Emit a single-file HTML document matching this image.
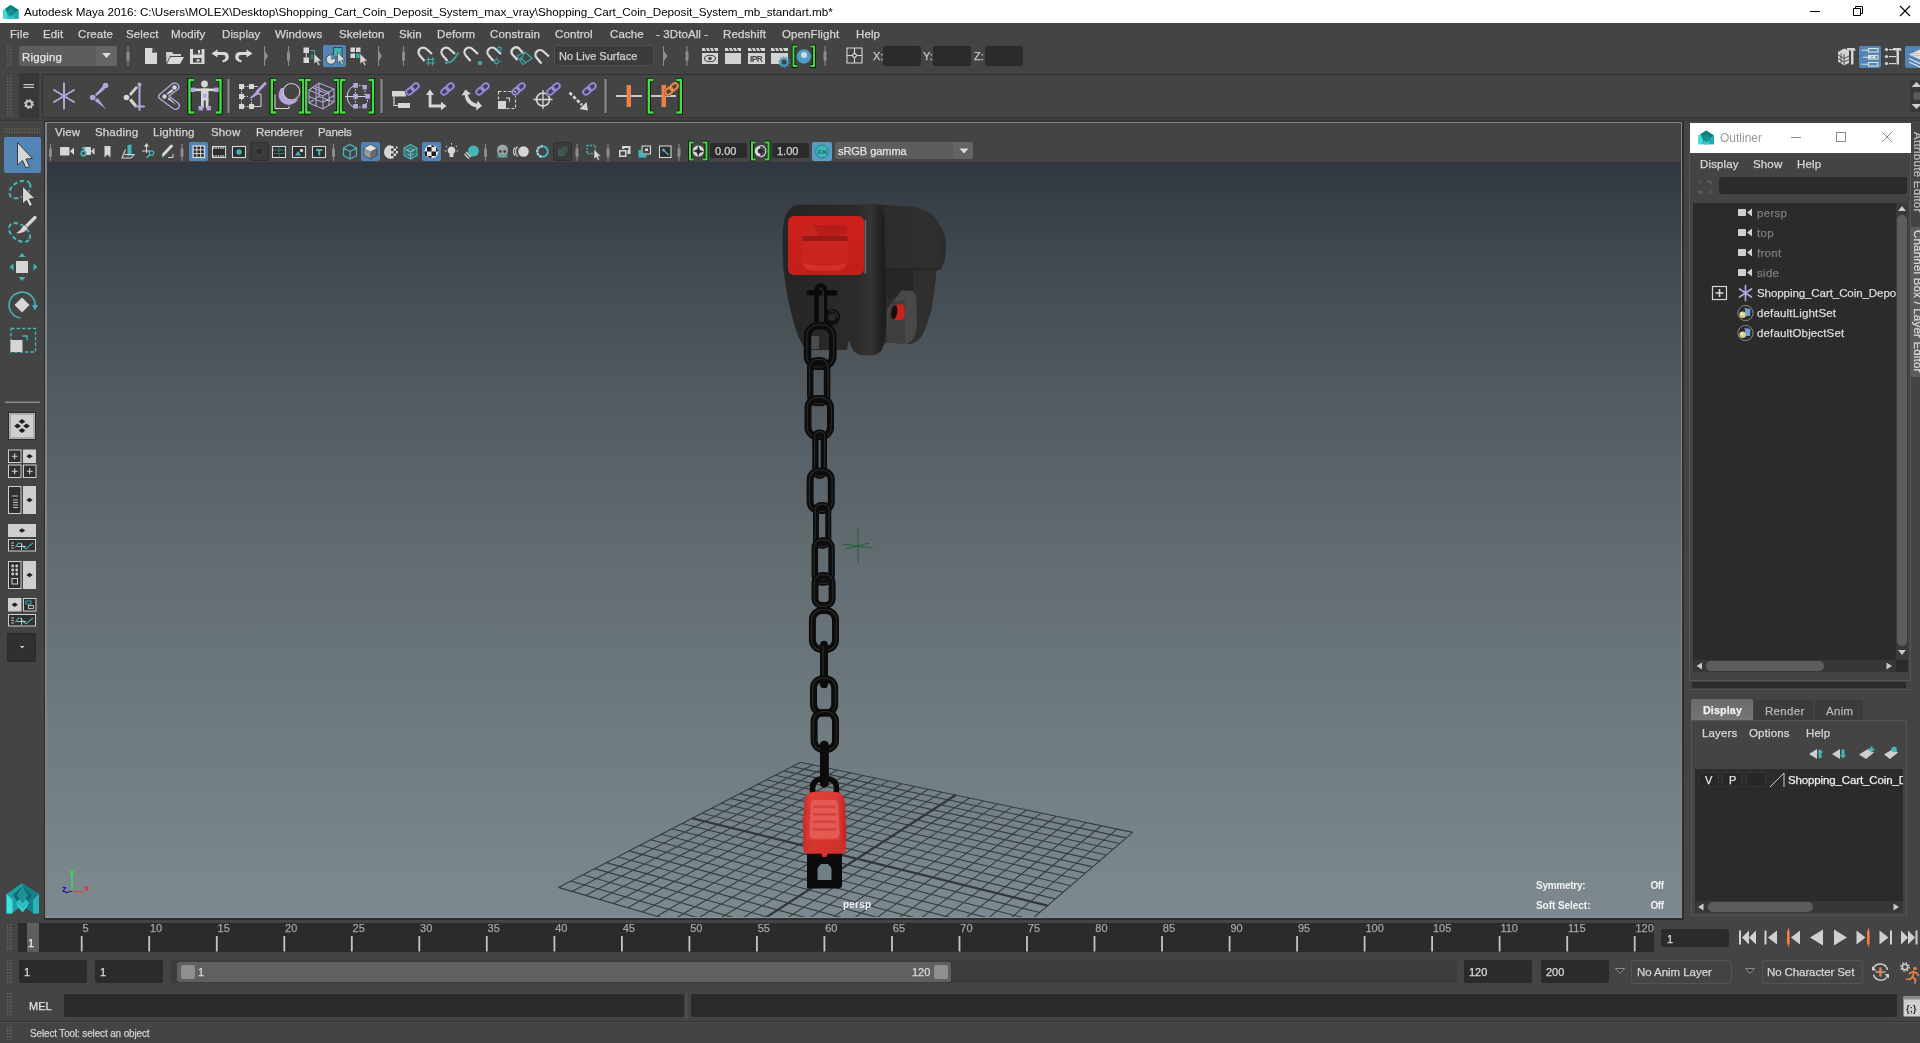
<!DOCTYPE html>
<html>
<head>
<meta charset="utf-8">
<title>Autodesk Maya 2016</title>
<style>
*{box-sizing:border-box;margin:0;padding:0}
html,body{width:1920px;height:1043px;overflow:hidden;background:#444444}
body{position:relative;will-change:transform;font-family:"Liberation Sans","DejaVu Sans",sans-serif;font-size:11px;color:#cfcfcf}
.a{position:absolute}
.t{position:absolute;white-space:nowrap;line-height:14px;-webkit-text-stroke:.25px currentColor}
#title .t,#right .t[style*="#999"]{-webkit-text-stroke:0}
#title{left:0;top:0;width:1920px;height:23px;background:#ffffff}
#title .t{color:#000;font-size:11.7px;top:5px}
.menu .t{color:#d6d6d6;font-size:11.5px;top:27px;letter-spacing:.1px}
.fld{position:absolute;background:#2b2b2b;border-radius:2px}
svg{position:absolute;overflow:visible}
</style>
</head>
<body>
<!-- TITLE BAR -->
<div id="title" class="a">
  <svg style="left:0;top:0" width="22" height="23"><path d="M3.200 10L10.800 5L18.600 10V18.800H3.200Z" fill="#2bbcc2"/><path d="M3.200 10L7 7.500L8.500 13L6.500 18.800H3.200Z" fill="#3fdcd4"/><path d="M10.800 5L18.600 10L15 13L10.800 9L7 13L5.500 8.500Z" fill="#0f7f7c"/><path d="M7 13L10.800 9L15 13L13 18.800H9Z" fill="#14908f"/><path d="M8.500 14.500L10.800 17L13 14.500L14 18.800H7.800Z" fill="#35c8d0"/><path d="M15 13L18.600 10V18.800H14Z" fill="#22aab2"/></svg>
  <span class="t" style="left:24px;letter-spacing:-.02px">Autodesk Maya 2016: C:\Users\MOLEX\Desktop\Shopping_Cart_Coin_Deposit_System_max_vray\Shopping_Cart_Coin_Deposit_System_mb_standart.mb*</span>
  <svg style="left:1810px;top:6px" width="12" height="12"><path d="M0 5.5H10" stroke="#000" stroke-width="1"/></svg>
  <svg style="left:1853px;top:6px" width="12" height="12"><path d="M.5 2.5H7.5V9.5H.5Z M2.5 2.5V.5H9.5V7.5H7.5" stroke="#000" fill="none"/></svg>
  <svg style="left:1900px;top:6px" width="12" height="12"><path d="M0 0L10 10M10 0L0 10" stroke="#000" stroke-width="1.1"/></svg>
</div>

<!-- MENU BAR -->
<div class="menu">
  <span class="t" style="left:10px">File</span>
  <span class="t" style="left:43px">Edit</span>
  <span class="t" style="left:78px">Create</span>
  <span class="t" style="left:126px">Select</span>
  <span class="t" style="left:171px">Modify</span>
  <span class="t" style="left:222px">Display</span>
  <span class="t" style="left:275px">Windows</span>
  <span class="t" style="left:339px">Skeleton</span>
  <span class="t" style="left:399px">Skin</span>
  <span class="t" style="left:437px">Deform</span>
  <span class="t" style="left:490px">Constrain</span>
  <span class="t" style="left:555px">Control</span>
  <span class="t" style="left:610px">Cache</span>
  <span class="t" style="left:656px">- 3DtoAll -</span>
  <span class="t" style="left:723px">Redshift</span>
  <span class="t" style="left:782px">OpenFlight</span>
  <span class="t" style="left:856px">Help</span>
</div>

<!-- STATUS LINE -->
<div id="status">
  <!-- dotted grip -->
  <svg style="left:7px;top:46px" width="8" height="22"><g fill="#5e5e5e"><rect x="0" y="0" width="1.5" height="1.5"/><rect x="3" y="0" width="1.5" height="1.5"/><rect x="0" y="3" width="1.5" height="1.5"/><rect x="3" y="3" width="1.5" height="1.5"/><rect x="0" y="6" width="1.5" height="1.5"/><rect x="3" y="6" width="1.5" height="1.5"/><rect x="0" y="9" width="1.5" height="1.5"/><rect x="3" y="9" width="1.5" height="1.5"/><rect x="0" y="12" width="1.5" height="1.5"/><rect x="3" y="12" width="1.5" height="1.5"/><rect x="0" y="15" width="1.5" height="1.5"/><rect x="3" y="15" width="1.5" height="1.5"/><rect x="0" y="18" width="1.5" height="1.5"/><rect x="3" y="18" width="1.5" height="1.5"/></g></svg>
  <div class="a" style="left:19px;top:46px;width:98px;height:20px;background:#5d5d5d;border-radius:2px"></div>
  <div class="a" style="left:96px;top:46px;width:21px;height:20px;background:#656565;border-radius:0 2px 2px 0"></div>
  <span class="t" style="left:22px;top:50px;font-size:11.500px;color:#e6e6e6;letter-spacing:.15px">Rigging</span>
  <svg style="left:102px;top:53px" width="10" height="6"><path d="M0 0H9L4.5 5Z" fill="#dcdcdc"/></svg>
  <!-- handles & collapse arrows -->
  <svg style="left:0;top:44px" width="1100" height="26">
    <g fill="#8c8c8c">
      <rect x="127.5" y="2" width="1" height="20"/><rect x="126.5" y="7" width="3" height="10" rx="1.5"/>
      <rect x="288" y="2" width="1" height="20"/><rect x="287" y="7" width="3" height="10" rx="1.5"/>
      <rect x="403" y="2" width="1" height="20"/><rect x="402" y="7" width="3" height="10" rx="1.5"/>
      <rect x="686.5" y="2" width="1" height="20"/><rect x="685.5" y="7" width="3" height="10" rx="1.5"/>
      <rect x="824.5" y="2" width="1" height="20"/><rect x="823.5" y="7" width="3" height="10" rx="1.5"/>
      <rect x="264" y="2" width="1" height="20"/><path d="M265 7L268 12L265 17Z"/>
      <rect x="378" y="2" width="1" height="20"/><path d="M379 7L382 12L379 17Z"/>
      <rect x="663" y="2" width="1" height="20"/><path d="M664 7L667.500 12L664 17Z"/>
    </g>
  </svg>
  <!-- new / open / save / undo / redo -->
  <svg style="left:140px;top:44px" width="120" height="26">
    <path d="M5 4H12L17 9V20H5Z" fill="#d8d8d8"/><path d="M12 4V9H17" fill="#444" stroke="#d8d8d8" stroke-width=".6"/>
    <path d="M26 8H32L33.500 10H41V12H30L26.500 19.500Z" fill="#d0d0d0"/><path d="M30.500 13H44L40 20H27Z" fill="#d8d8d8"/>
    <path d="M50 5H64.500V20H50Z" fill="#d8d8d8"/><rect x="53" y="5" width="8.500" height="5.500" fill="#444"/><rect x="58" y="6" width="2" height="3.500" fill="#d8d8d8"/><rect x="53" y="14" width="8.500" height="4.500" fill="#444"/><rect x="56.500" y="15.300" width="3" height="2.200" fill="#d8d8d8"/>
    <path d="M77.500 5.500L71.500 9.500L77.500 13.500V11H83Q85.500 11 85.500 13.200Q85.500 15.500 82 16.500L83 18.500Q88.800 17.200 88.800 12.800Q88.800 8 83.500 8H77.500Z" fill="#d8d8d8"/>
    <path d="M106.500 5.500L112.500 9.500L106.500 13.500V11H101Q98.500 11 98.500 13.200Q98.500 15.500 102 16.500L101 18.500Q95.200 17.200 95.200 12.800Q95.200 8 100.500 8H106.500Z" fill="#d8d8d8"/>
  </svg>
  <!-- selection mode icons -->
  <div class="a" style="left:323px;top:45px;width:23px;height:22px;background:#5285b6;border-radius:2px"></div>
  <svg style="left:300px;top:44px" width="70" height="26">
    <g fill="#d8d8d8"><rect x="3.500" y="3.500" width="5.500" height="5.500"/><rect x="3.500" y="13.500" width="5.500" height="5.500"/><rect x="5.800" y="9" width="1" height="4.500"/></g>
    <path d="M10 6.500H14.500V10.500M12 10.500V15" stroke="#3aa7a7" fill="none" stroke-width="1.200"/>
    <path d="M14 9.500L14 20L16.500 17.800L18.300 21.800L20 21L18.200 17.200L21.500 17Z" fill="#d8d8d8" stroke="#444" stroke-width=".5"/>
    <rect x="33.500" y="3.500" width="8.500" height="9.500" fill="#45b0b0" stroke="#333" stroke-width=".8"/>
    <circle cx="31" cy="15.500" r="4.800" fill="#d8d8d8" stroke="#333" stroke-width=".8"/><path d="M31 15.500V10.700A4.800 4.800 0 0 1 35.800 15.500Z" fill="#5285b6"/>
    <path d="M37.500 8L37.500 19L40 16.800L41.800 20.800L43.500 20L41.700 16.200L45 16Z" fill="#d8d8d8" stroke="#444" stroke-width=".6"/>
    <g fill="#d8d8d8"><rect x="50.500" y="3.500" width="4.500" height="4.500"/><rect x="56" y="3.500" width="4.500" height="4.500"/><rect x="50.500" y="9.500" width="4.500" height="4.500"/></g><rect x="56" y="9.500" width="4.500" height="4.500" fill="#3aa7a7"/>
    <path d="M60 9.500L60 20L62.500 17.800L64.300 21.800L66 21L64.200 17.200L67.500 17Z" fill="#d8d8d8" stroke="#444" stroke-width=".5"/>
  </svg>
  <!-- magnets -->
  <svg style="left:415px;top:44px" width="140" height="26">
    <g fill="none" stroke="#d8d8d8" stroke-width="2.300" stroke-linecap="butt">
      <path d="M9.500 17L4.800 11.500A4.600 4.600 0 0 1 11.500 5L17 10"/>
      <path d="M32.500 17L27.800 11.500A4.600 4.600 0 0 1 34.500 5L40 10"/>
      <path d="M55.500 17L50.800 11.500A4.600 4.600 0 0 1 57.500 5L63 10"/>
      <path d="M78.500 17L73.800 11.500A4.600 4.600 0 0 1 80.500 5L86 10"/>
      <path d="M102.500 16L97 10A4.600 4.600 0 0 1 103.500 4L109 10"/>
      <path d="M126.500 19.500L121.800 14A4.600 4.600 0 0 1 128.500 7.500L134 12.500"/>
    </g>
    <g stroke="#3aa7a7" stroke-width="1.200" fill="none">
      <path d="M11 15.500H20M11 19H20M13.500 13V21.500M17.500 13V21.500"/>
      <path d="M30 19Q36 19 39 15T43.500 8.500" stroke-width="1.800"/>
      <circle cx="84.500" cy="5" r="1.800"/><circle cx="81.500" cy="17.500" r="2"/><path d="M81.500 14V13M81.500 21V22M85 17.500H86.500"/>
      <path d="M102 12L110 8L117 14.500L108 20.500Z M105 13.500L111 18.500M108.500 11L105 17"/>
    </g>
    <circle cx="65" cy="19" r="2.300" fill="#3aa7a7"/>
  </svg>
  <div class="a" style="left:554px;top:45px;width:100px;height:21px;background:#3b3b3b;border:1px solid #4f4f4f;border-radius:3px"></div>
  <span class="t" style="left:559px;top:49px;font-size:11px;color:#d2d2d2;letter-spacing:0">No Live Surface</span>
  <!-- render icons -->
  <svg style="left:700px;top:44px" width="120" height="26">
    <g fill="#d4d4d4">
      <rect x="2" y="9" width="16" height="11"/><path d="M2 4H18V7H2Z"/>
      <rect x="25" y="9" width="16" height="11"/><path d="M25 4H41V7H25Z"/>
      <rect x="48" y="9" width="17" height="11"/><path d="M48 4H65V7H48Z"/>
      <rect x="71" y="9" width="17" height="11"/><path d="M71 4H88V7H71Z"/>
    </g>
    <g stroke="#444" stroke-width="1.200"><path d="M5 3.500L7 7.500M9 3.500L11 7.500M13 3.500L15 7.500M28 3.500L30 7.500M32 3.500L34 7.500M36 3.500L38 7.500M51 3.500L53 7.500M55 3.500L57 7.500M59 3.500L61 7.500M74 3.500L76 7.500M78 3.500L80 7.500M82 3.500L84 7.500"/></g>
    <ellipse cx="10" cy="14.500" rx="5.500" ry="3.300" fill="none" stroke="#444" stroke-width="1.100"/><circle cx="10" cy="14.500" r="1.800" fill="#444"/>
    <text x="50" y="18.300" font-size="8.500" font-weight="bold" fill="#444" font-family="Liberation Sans, sans-serif" textLength="13">IPR</text>
    <circle cx="84" cy="18" r="3.600" fill="#444" stroke="#4a9fc4" stroke-width="2"/><circle cx="84" cy="18" r="5" fill="none" stroke="#4a9fc4" stroke-width="1.300" stroke-dasharray="1.600 1.500"/>
    <path d="M97 2.500H93.500V22H97M110.500 2.500H114V22H110.500" fill="none" stroke="#000" stroke-width="3.400"/>
    <path d="M97 2.500H93.500V22H97M110.500 2.500H114V22H110.500" fill="none" stroke="#3be03b" stroke-width="2"/>
    <circle cx="103.800" cy="12.500" r="7.200" fill="#4a9fc4"/><circle cx="104" cy="11" r="3" fill="#d8d8d8"/>
  </svg>
  <svg style="left:846px;top:47px" width="18" height="18"><path d="M1 1H16V16H1Z M8.500 1V6M8.500 11V16M1 8.500H6M11 8.500H16 M8.500 6L11 8.500L8.500 11L6 8.500Z" fill="none" stroke="#d8d8d8" stroke-width="1.100"/></svg>
  <span class="t" style="left:873px;top:49px;font-size:11px;color:#c8c8c8">X:</span>
  <span class="t" style="left:923px;top:49px;font-size:11px;color:#c8c8c8">Y:</span>
  <span class="t" style="left:974px;top:49px;font-size:11px;color:#c8c8c8">Z:</span>
  <div class="fld" style="left:883px;top:46px;width:38px;height:20px"></div>
  <div class="fld" style="left:933px;top:46px;width:38px;height:20px"></div>
  <div class="fld" style="left:985px;top:46px;width:38px;height:20px"></div>
  <!-- right icons -->
  <div class="a" style="left:1859px;top:46px;width:22px;height:22px;background:#5285b6;border-radius:2px"></div>
  <div class="a" style="left:1905px;top:46px;width:15px;height:22px;background:#5285b6;border-radius:2px 0 0 2px"></div>
  <svg style="left:1836px;top:44px" width="84" height="26">
    <g fill="#d4d4d4"><path d="M2 8L8 4.500L13 6.500V19L8 21.500L2 17.500Z"/><path d="M11 4H18.500L20 6.500H17.500V20.500H15V6.500H11Z"/></g>
    <path d="M2 11L8 14.500L13 12M2 14.500L8 18L13 15.500M8 10V21.500M5 9.500V19.500" stroke="#444" stroke-width=".9" fill="none"/>
    <g fill="none" stroke="#e0e0e0" stroke-width="1.100"><rect x="32.500" y="4.500" width="9.500" height="3.500"/><rect x="32.500" y="11.500" width="9.500" height="3.500"/><rect x="32.500" y="18.500" width="9.500" height="3.500"/><path d="M25.500 6.200H32.500M27 13.200H32.500M25.500 20.200H32.500"/></g><circle cx="38" cy="13.200" r="1.600" fill="#e0e0e0"/><rect x="33" y="12" width="2.500" height="2.500" fill="#e0e0e0"/>
    <g fill="#d4d4d4"><circle cx="50.500" cy="5.500" r="1.600"/><circle cx="50.500" cy="12.500" r="1.600"/><circle cx="50.500" cy="19.500" r="1.600"/><rect x="53" y="5" width="4" height="1.200"/><rect x="53" y="12" width="7" height="1.200"/><rect x="53" y="19" width="7" height="1.200"/><path d="M57 4H64.500L66 6.500H63V20.500H60.500V6.500H57Z"/></g>
    <path d="M73 10.500L84 5.500L95 10.500L84 15.500Z" fill="#e0e0e0"/><path d="M73 14.500L84 19.500L95 14.500M73 18L84 23L95 18" fill="none" stroke="#e0e0e0" stroke-width="1.200"/><path d="M76 9.500H92M76 11.500H92" stroke="#c9a0a0" stroke-width=".6"/>
  </svg>
</div>

<!-- SHELF -->
<div id="shelf">
      <div class="a" style="left:19px;top:73px;width:20px;height:45px;background:#383838"></div>
  <div class="a" style="left:42px;top:74px;width:1878px;height:44px;background:#444;border:1px solid #303030;border-right:0;border-bottom-color:#363636"></div>
    <div class="a" style="left:1910px;top:80px;width:10px;height:32px;background:#393939"></div>
  <svg style="left:0;top:72px" width="1920" height="50">
    <g fill="#686868"><rect x="7" y="3" width="1.4" height="1.4"/><rect x="10.2" y="3" width="1.4" height="1.4"/><rect x="7" y="6" width="1.4" height="1.4"/><rect x="10.2" y="6" width="1.4" height="1.4"/><rect x="7" y="9" width="1.4" height="1.4"/><rect x="10.2" y="9" width="1.4" height="1.4"/><rect x="7" y="12" width="1.4" height="1.4"/><rect x="10.2" y="12" width="1.4" height="1.4"/><rect x="7" y="15" width="1.4" height="1.4"/><rect x="10.2" y="15" width="1.4" height="1.4"/><rect x="7" y="18" width="1.4" height="1.4"/><rect x="10.2" y="18" width="1.4" height="1.4"/><rect x="7" y="21" width="1.4" height="1.4"/><rect x="10.2" y="21" width="1.4" height="1.4"/><rect x="7" y="24" width="1.4" height="1.4"/><rect x="10.2" y="24" width="1.4" height="1.4"/><rect x="7" y="27" width="1.4" height="1.4"/><rect x="10.2" y="27" width="1.4" height="1.4"/><rect x="7" y="30" width="1.4" height="1.4"/><rect x="10.2" y="30" width="1.4" height="1.4"/><rect x="7" y="33" width="1.4" height="1.4"/><rect x="10.2" y="33" width="1.4" height="1.4"/><rect x="7" y="36" width="1.4" height="1.4"/><rect x="10.2" y="36" width="1.4" height="1.4"/><rect x="7" y="39" width="1.4" height="1.4"/><rect x="10.2" y="39" width="1.4" height="1.4"/><rect x="7" y="42" width="1.4" height="1.4"/><rect x="10.2" y="42" width="1.4" height="1.4"/></g>
    <path d="M23.500 12.700H34M23.500 15.300H34" stroke="#c4c4c4" stroke-width="1.300"/>
    <circle cx="29" cy="32" r="3" fill="none" stroke="#c4c4c4" stroke-width="2"/><circle cx="29" cy="32" r="4.300" fill="none" stroke="#c4c4c4" stroke-width="1.500" stroke-dasharray="1.500 1.880"/>
    <path d="M1911.500 15L1916.500 10L1921.500 15Z M1911.500 32L1916.500 37L1921.500 32Z" fill="#cfcfcf"/><circle cx="1917" cy="24" r="4" fill="#5c5c5c"/>
    <!-- 1 joint asterisk -->
    <path d="M64 11.500V36.500M54 18L74 30M54 30L74 18" stroke="#b5a6de" stroke-width="2" stroke-linecap="round"/>
    <!-- 2 joint < -->
    <g fill="#b5a6de"><circle cx="105.500" cy="13.500" r="2.800"/><circle cx="92.700" cy="25.500" r="2.800"/><path d="M103 14L95 22.500L96.500 24L105 17Z"/><path d="M94.500 28.500L97.500 26L106 37Z"/></g>
    <!-- 3 IK handle -->
    <g fill="#d6d6d6"><circle cx="126.500" cy="25.500" r="2.800"/><path d="M129 22L136 14L138 15.500L131 24Z"/><path d="M129 28.500L131.500 26.500L137 33L134.500 35Z"/></g>
    <path d="M139.500 12V38M135 34.500H144" stroke="#b5a6de" stroke-width="2" stroke-linecap="round"/><circle cx="139.500" cy="12.500" r="2" fill="#b5a6de"/>
    <!-- 4 IK spline -->
    <path d="M172.500 11.500Q177 10 178.800 14Q179.500 16.500 177 18L169 24L178 31Q180.500 33.500 178.500 36Q176.500 38.500 173 36.500L159.500 26.500Q157.500 24.500 159.500 22.500Z" fill="none" stroke="#b5a6de" stroke-width="1.400"/>
    <g fill="#d6d6d6"><circle cx="174.500" cy="15.500" r="2.200"/><circle cx="164.500" cy="24.500" r="2.200"/><path d="M172 17L166.500 21.500L167.500 22.800L173.500 19Z"/><path d="M167.500 27L169 25.500L176.500 33Z"/></g>
    <!-- 5 HIK -->
    <path d="M194.0 8H189.5V40.5H194.0M216.0 8H220.5V40.5H216.0" fill="none" stroke="#0a0a0a" stroke-width="4.2"/><path d="M194.0 8H189.5V40.5H194.0M216.0 8H220.5V40.5H216.0" fill="none" stroke="#3fe03f" stroke-width="2.4"/>
    <g fill="#d6d6d6"><circle cx="204.500" cy="12" r="3.400"/><rect x="193" y="16.500" width="23" height="2.600"/><rect x="201" y="16.500" width="7.500" height="12"/><rect x="201" y="27" width="2.800" height="9"/><rect x="205.700" y="27" width="2.800" height="9"/></g>
    <g fill="#b5a6de"><rect x="190.800" y="15.600" width="4.400" height="4.400"/><rect x="214.300" y="15.600" width="4.400" height="4.400"/><rect x="202.800" y="21.800" width="4" height="4"/><rect x="198.600" y="34" width="4.400" height="4.400"/><rect x="206.500" y="34" width="4.400" height="4.400"/></g>
    <rect x="227.500" y="7" width="2" height="34" fill="#8c8c8c"/>
    <!-- 6 paint weights -->
    <g fill="#d6d6d6"><rect x="239" y="12" width="5" height="5"/><rect x="249" y="12" width="5" height="5"/><rect x="239" y="22" width="5" height="5"/><rect x="239" y="32" width="5" height="5"/><rect x="249" y="32" width="5" height="5"/></g>
    <path d="M244 14.500H249M241.500 17V22M241.500 27V32M244 34.500H249M251.500 27V32M244 24.500H248" stroke="#d6d6d6" stroke-width="1" stroke-dasharray="1.600 1.400"/>
    <path d="M254 14.500H258M254 34.500H261V22H257" stroke="#d6d6d6" stroke-width="1" fill="none"/>
    <path d="M265 11.500L257 20" stroke="#b5a6de" stroke-width="2.800" stroke-linecap="round"/><path d="M257.500 18.500L259.500 20.500Q254 26.500 249 26.500Q253 23 257.500 18.500Z" fill="#b5a6de"/>
    <!-- 7 -->
    <path d="M276.3 8H271.8V40.5H276.3M298.8 8H303.3V40.5H298.8" fill="none" stroke="#0a0a0a" stroke-width="4.2"/><path d="M276.3 8H271.8V40.5H276.3M298.8 8H303.3V40.5H298.8" fill="none" stroke="#3fe03f" stroke-width="2.4"/>
    <path d="M275 22.500V36.500H289V34" fill="none" stroke="#d6d6d6" stroke-width="1"/>
    <path d="M281 16Q276 24 281.500 30Q288 35.500 295.500 30.500Q297 29 298 27Q290 31 285.500 26Q282 21.500 284 16Z" fill="#b5a6de"/>
    <circle cx="291.500" cy="19.800" r="8.300" fill="#444" stroke="#d6d6d6" stroke-width="1.100"/>
    <!-- 8 lattice -->
    <path d="M310.8 8H306.3V40.5H310.8M333.8 8H338.3V40.5H333.8" fill="none" stroke="#0a0a0a" stroke-width="4.2"/><path d="M310.8 8H306.3V40.5H310.8M333.8 8H338.3V40.5H333.8" fill="none" stroke="#3fe03f" stroke-width="2.4"/>
    <g fill="none" stroke="#b5a6de" stroke-width="1.100"><path d="M309 18L319 11L334 17V30L323 37L309 31Z"/><path d="M309 18L323 24L334 17M323 24V37M309 24.500L323 30.500L334 23.500M316 14.500L329 20.500V33.500M316 14.500V34M319 11V24.500L309 31M319 24.500L334 30M312.500 15.500L326.500 21.500"/></g>
    <!-- 9 cluster -->
    <path d="M345.5 8H341V40.5H345.5M368.5 8H373V40.5H368.5" fill="none" stroke="#0a0a0a" stroke-width="4.2"/><path d="M345.5 8H341V40.5H345.5M368.5 8H373V40.5H368.5" fill="none" stroke="#3fe03f" stroke-width="2.4"/>
    <path d="M354.500 13.500A12 12 0 0 0 354.500 35.500M345 24.500H365" fill="none" stroke="#d6d6d6" stroke-width="1"/>
    <path d="M356 13.500H365.500M356 24.500H367.500M356 35H365.500M355.500 14V35M365 15.500V24M367.500 25V30L365 34" stroke="#d6d6d6" stroke-width="1" stroke-dasharray="1.600 1.400" fill="none"/>
    <g fill="#b5a6de"><rect x="353.300" y="11" width="4.700" height="4.700"/><rect x="362.500" y="13" width="4.400" height="4.400"/><rect x="353.300" y="22" width="4.700" height="4.700"/><rect x="365.300" y="22" width="4.700" height="4.700"/><rect x="353.300" y="32" width="4.700" height="4.700"/><rect x="362.500" y="32" width="4.400" height="4.400"/></g>
    <rect x="380.500" y="7" width="2" height="34" fill="#8c8c8c"/>
    <!-- 10 parent constraint -->
    <g fill="#d6d6d6"><rect x="392" y="19" width="14" height="5.500"/><rect x="398" y="31" width="12" height="5"/></g><path d="M394 24.500V33.500H398" fill="none" stroke="#d6d6d6" stroke-width="1.200"/>
    <g transform="translate(412.5 17) rotate(-40) scale(.92)"><rect x="-8" y="-3" width="9" height="6" rx="3" fill="none" stroke="#4b4480" stroke-width="3.2"/><rect x="-1" y="-3" width="9" height="6" rx="3" fill="none" stroke="#4b4480" stroke-width="3.2"/><rect x="-8" y="-3" width="9" height="6" rx="3" fill="none" stroke="#9a8fd0" stroke-width="1.8"/><rect x="-1" y="-3" width="9" height="6" rx="3" fill="none" stroke="#9a8fd0" stroke-width="1.8"/></g>
    <!-- 11 point -->
    <path d="M430 17.500L426 23H428.700V35.500H441V38.200L446.500 34L441 29.800V32.500H431.500V23H434Z" fill="#d6d6d6"/>
    <g transform="translate(447.5 17) rotate(-40) scale(.92)"><rect x="-8" y="-3" width="9" height="6" rx="3" fill="none" stroke="#4b4480" stroke-width="3.2"/><rect x="-1" y="-3" width="9" height="6" rx="3" fill="none" stroke="#4b4480" stroke-width="3.2"/><rect x="-8" y="-3" width="9" height="6" rx="3" fill="none" stroke="#9a8fd0" stroke-width="1.8"/><rect x="-1" y="-3" width="9" height="6" rx="3" fill="none" stroke="#9a8fd0" stroke-width="1.8"/></g>
    <!-- 12 orient -->
    <path d="M465.500 17.500L461.500 23.500L464.500 23Q466 33.500 476.500 35.500L476 38.500L482 34L477.500 28.500L477 31.800Q469.500 30 467.800 22.500L471 22Z" fill="#d6d6d6"/>
    <g transform="translate(482.5 17) rotate(-40) scale(.92)"><rect x="-8" y="-3" width="9" height="6" rx="3" fill="none" stroke="#4b4480" stroke-width="3.2"/><rect x="-1" y="-3" width="9" height="6" rx="3" fill="none" stroke="#4b4480" stroke-width="3.2"/><rect x="-8" y="-3" width="9" height="6" rx="3" fill="none" stroke="#9a8fd0" stroke-width="1.8"/><rect x="-1" y="-3" width="9" height="6" rx="3" fill="none" stroke="#9a8fd0" stroke-width="1.8"/></g>
    <!-- 13 scale -->
    <rect x="498.500" y="19.500" width="17" height="17" fill="none" stroke="#d6d6d6" stroke-width="1.100" stroke-dasharray="3 2"/><rect x="498" y="29" width="8" height="8" fill="#d6d6d6"/><path d="M506 26H509.500V29.500" fill="none" stroke="#d6d6d6" stroke-width="1.100"/>
    <g transform="translate(518.5 17) rotate(-40) scale(.92)"><rect x="-8" y="-3" width="9" height="6" rx="3" fill="none" stroke="#4b4480" stroke-width="3.2"/><rect x="-1" y="-3" width="9" height="6" rx="3" fill="none" stroke="#4b4480" stroke-width="3.2"/><rect x="-8" y="-3" width="9" height="6" rx="3" fill="none" stroke="#9a8fd0" stroke-width="1.8"/><rect x="-1" y="-3" width="9" height="6" rx="3" fill="none" stroke="#9a8fd0" stroke-width="1.8"/></g>
    <!-- 14 aim -->
    <circle cx="543" cy="27.500" r="6.500" fill="none" stroke="#d6d6d6" stroke-width="1.700"/><path d="M533.500 27.500H552.500M543 18V37" stroke="#d6d6d6" stroke-width="1.300"/>
    <g transform="translate(553.5 17) rotate(-40) scale(.92)"><rect x="-8" y="-3" width="9" height="6" rx="3" fill="none" stroke="#4b4480" stroke-width="3.2"/><rect x="-1" y="-3" width="9" height="6" rx="3" fill="none" stroke="#4b4480" stroke-width="3.2"/><rect x="-8" y="-3" width="9" height="6" rx="3" fill="none" stroke="#9a8fd0" stroke-width="1.8"/><rect x="-1" y="-3" width="9" height="6" rx="3" fill="none" stroke="#9a8fd0" stroke-width="1.8"/></g>
    <!-- 15 pole vector -->
    <path d="M569.500 20.500L582 33" stroke="#d6d6d6" stroke-width="2.600" stroke-dasharray="3.500 1.800"/><path d="M588 38.500L579.500 37L586.500 30Z" fill="#d6d6d6"/>
    <g transform="translate(589.5 17) rotate(-40) scale(.92)"><rect x="-8" y="-3" width="9" height="6" rx="3" fill="none" stroke="#4b4480" stroke-width="3.2"/><rect x="-1" y="-3" width="9" height="6" rx="3" fill="none" stroke="#4b4480" stroke-width="3.2"/><rect x="-8" y="-3" width="9" height="6" rx="3" fill="none" stroke="#9a8fd0" stroke-width="1.8"/><rect x="-1" y="-3" width="9" height="6" rx="3" fill="none" stroke="#9a8fd0" stroke-width="1.8"/></g>
    <rect x="604.500" y="7" width="2" height="34" fill="#8c8c8c"/>
    <!-- 16 -->
    <path d="M616 24H642" stroke="#d6d6d6" stroke-width="1.800"/><rect x="626.500" y="13" width="4.500" height="22" fill="#e8814a"/>
    <!-- 17 -->
    <path d="M653.3 8H648.8V40.5H653.3M676.3 8H680.8V40.5H676.3" fill="none" stroke="#0a0a0a" stroke-width="4.2"/><path d="M653.3 8H648.8V40.5H653.3M676.3 8H680.8V40.5H676.3" fill="none" stroke="#3fe03f" stroke-width="2.4"/>
    <path d="M651 24H676" stroke="#d6d6d6" stroke-width="1.800"/><rect x="661.500" y="13" width="4.500" height="22" fill="#e8814a"/>
    <g transform="translate(671.5 17) rotate(-40) scale(.92)"><rect x="-8" y="-3" width="9" height="6" rx="3" fill="none" stroke="#8a4a20" stroke-width="3.2"/><rect x="-1" y="-3" width="9" height="6" rx="3" fill="none" stroke="#8a4a20" stroke-width="3.2"/><rect x="-8" y="-3" width="9" height="6" rx="3" fill="none" stroke="#e89057" stroke-width="1.8"/><rect x="-1" y="-3" width="9" height="6" rx="3" fill="none" stroke="#e89057" stroke-width="1.8"/></g>
  </svg>
</div>

<div class="a" style="left:0;top:118px;width:1920px;height:2px;background:#404040"></div><div class="a" style="left:0;top:120px;width:1920px;height:1px;background:#393939"></div>
<!-- TOOLBOX -->
<div id="toolbox">
  <div class="a" style="left:4px;top:137px;width:37px;height:36px;background:#5285b6;border-radius:2px"></div>
  <div class="a" style="left:7px;top:633px;width:29px;height:29px;background:#303030;border:1px solid #2a2a2a;border-radius:1px"></div>
  <svg style="left:0;top:0" width="46" height="920">
    <g fill="#7a6a50"><rect x="4.0" y="128.5" width="1.2" height="1.2"/><rect x="4.0" y="131.5" width="1.2" height="1.2"/><rect x="6.5" y="128.5" width="1.2" height="1.2"/><rect x="6.5" y="131.5" width="1.2" height="1.2"/><rect x="9.0" y="128.5" width="1.2" height="1.2"/><rect x="9.0" y="131.5" width="1.2" height="1.2"/><rect x="11.5" y="128.5" width="1.2" height="1.2"/><rect x="11.5" y="131.5" width="1.2" height="1.2"/><rect x="14.0" y="128.5" width="1.2" height="1.2"/><rect x="14.0" y="131.5" width="1.2" height="1.2"/><rect x="16.5" y="128.5" width="1.2" height="1.2"/><rect x="16.5" y="131.5" width="1.2" height="1.2"/><rect x="19.0" y="128.5" width="1.2" height="1.2"/><rect x="19.0" y="131.5" width="1.2" height="1.2"/><rect x="21.5" y="128.5" width="1.2" height="1.2"/><rect x="21.5" y="131.5" width="1.2" height="1.2"/><rect x="24.0" y="128.5" width="1.2" height="1.2"/><rect x="24.0" y="131.5" width="1.2" height="1.2"/><rect x="26.5" y="128.5" width="1.2" height="1.2"/><rect x="26.5" y="131.5" width="1.2" height="1.2"/><rect x="29.0" y="128.5" width="1.2" height="1.2"/><rect x="29.0" y="131.5" width="1.2" height="1.2"/><rect x="31.5" y="128.5" width="1.2" height="1.2"/><rect x="31.5" y="131.5" width="1.2" height="1.2"/><rect x="34.0" y="128.5" width="1.2" height="1.2"/><rect x="34.0" y="131.5" width="1.2" height="1.2"/><rect x="36.5" y="128.5" width="1.2" height="1.2"/><rect x="36.5" y="131.5" width="1.2" height="1.2"/><rect x="39.0" y="128.5" width="1.2" height="1.2"/><rect x="39.0" y="131.5" width="1.2" height="1.2"/></g>
    <!-- select arrow -->
    <path d="M17.500 142.500V165L22.500 160.500L26 168L29.500 166.500L26 159L32.500 158.500Z" fill="#d6d6d6" stroke="#3a3a3a" stroke-width="1"/>
    <!-- lasso -->
    <ellipse cx="20" cy="189.500" rx="11.500" ry="7.500" transform="rotate(-32 20 189.500)" fill="none" stroke="#45b5b8" stroke-width="2" stroke-dasharray="4.500 2.500"/>
    <path d="M22.500 186V204L26.500 200.500L29.500 206.500L32.500 205L29.500 199L35 198.500Z" fill="#d6d6d6" stroke="#3a3a3a" stroke-width="1"/>
    <!-- paint -->
    <ellipse cx="19.500" cy="232.500" rx="12" ry="7.500" transform="rotate(38 19.500 232.500)" fill="none" stroke="#45b5b8" stroke-width="2" stroke-dasharray="4.500 2.500"/>
    <path d="M35 217.500L26.500 226" stroke="#d6d6d6" stroke-width="3.200" stroke-linecap="round"/><path d="M24 224.500L28 228.500Q24 234.500 15.500 233.500Q21 230 24 224.500Z" fill="#d6d6d6" stroke="#3a3a3a" stroke-width=".6"/>
    <!-- move -->
    <rect x="16" y="261" width="12" height="12" fill="#d6d6d6"/><path d="M22 253L25.500 257H18.500Z M22 281L25.500 277H18.500Z M9.500 267L13.500 263.500V270.500Z M37.500 267L33.500 263.500V270.500Z" fill="#45b5b8"/>
    <!-- rotate -->
    <path d="M22 297.500L29.500 305L22 312.500L14.500 305Z" fill="#d6d6d6"/><path d="M20.500 318A13 13 0 1 1 35 306.500" fill="none" stroke="#45b5b8" stroke-width="1.600"/><path d="M32 305L35 310.500L38 305Z" fill="#45b5b8"/>
    <!-- scale -->
    <rect x="11" y="328.500" width="24.500" height="23.500" fill="none" stroke="#45b5b8" stroke-width="1.300" stroke-dasharray="3.500 2"/><rect x="10.500" y="340" width="12" height="12" fill="#d6d6d6"/><path d="M22.500 336H27V340.500" fill="none" stroke="#45b5b8" stroke-width="1.300"/>
    <!-- divider -->
    <rect x="5" y="401.500" width="35" height="1.500" fill="#8a8a8a"/>
    <!-- single view -->
    <rect x="8.500" y="412.500" width="27" height="27" fill="#cfcfcf" stroke="#2c2c2c" stroke-width="1"/><rect x="10" y="414" width="24" height="24" fill="none" stroke="#8a8a8a" stroke-width="1"/>
    <path d="M18.6 421.5L22 419.1L25.4 421.5L22 423.9Z" fill="#222"/><path d="M14.1 426L17.5 423.6L20.9 426L17.5 428.4Z" fill="#222"/><path d="M23.1 426L26.5 423.6L29.9 426L26.5 428.4Z" fill="#222"/><path d="M18.6 430.5L22 428.1L25.4 430.5L22 432.9Z" fill="#222"/>
    <!-- four view -->
    <rect x="8.500" y="450" width="12.500" height="12.500" fill="#303030" stroke="#cfcfcf" stroke-width="1"/><path d="M11.7 456.2H17.7M14.7 453.2V459.2" stroke="#cfcfcf" stroke-width="1.1"/>
    <rect x="23" y="449.500" width="13" height="13.500" fill="#cfcfcf"/><path d="M26.3 456.2L29.5 454.0L32.7 456.2L29.5 458.4Z" fill="#222"/>
    <rect x="8.500" y="465" width="12.500" height="12.500" fill="#303030" stroke="#cfcfcf" stroke-width="1"/><path d="M11.7 471.2H17.7M14.7 468.2V474.2" stroke="#cfcfcf" stroke-width="1.1"/>
    <rect x="23.500" y="465" width="12.500" height="12.500" fill="#303030" stroke="#cfcfcf" stroke-width="1"/><path d="M26.7 471.2H32.7M29.7 468.2V474.2" stroke="#cfcfcf" stroke-width="1.1"/>
    <!-- outliner/persp -->
    <rect x="8.500" y="486.500" width="12.500" height="27" fill="#303030" stroke="#cfcfcf" stroke-width="1"/><path d="M12 496H18M13 500H18M13 502.500H18M13 505H18M13 507.500H18" stroke="#cfcfcf" stroke-width=".9"/>
    <rect x="23" y="486" width="13" height="28" fill="#cfcfcf"/><path d="M26.3 500L29.5 497.8L32.7 500L29.5 502.2Z" fill="#222"/>
    <!-- persp/graph -->
    <rect x="8" y="524" width="28" height="13" fill="#cfcfcf"/><path d="M18.8 530.5L22 528.3L25.2 530.5L22 532.7Z" fill="#222"/>
    <rect x="8.500" y="539.500" width="27" height="11.500" fill="#303030" stroke="#cfcfcf" stroke-width="1"/><path d="M11 543H14M11 545.500H14M11 548H14" stroke="#cfcfcf" stroke-width=".9"/><path d="M15.500 547.500Q19 539.500 22.500 545.500T29 546L33 543" fill="none" stroke="#45b5b8" stroke-width="1.100"/><path d="M17 546.500H26M21.500 543V550" stroke="#cfcfcf" stroke-width=".9"/>
    <!-- hypershade/persp -->
    <rect x="8.500" y="561.500" width="12.500" height="27" fill="#303030" stroke="#cfcfcf" stroke-width="1"/><g fill="#cfcfcf"><circle cx="12.700" cy="566" r="1.400"/><circle cx="16.700" cy="566" r="1.400"/><circle cx="12.700" cy="570" r="1.400"/><circle cx="16.700" cy="570" r="1.400"/><circle cx="12.700" cy="574" r="1.400"/><circle cx="16.700" cy="574" r="1.400"/></g><rect x="12" y="578.500" width="5.500" height="5.500" fill="none" stroke="#cfcfcf" stroke-width="1"/>
    <rect x="23" y="561" width="13" height="28" fill="#cfcfcf"/><path d="M26.3 575L29.5 572.8L32.7 575L29.5 577.2Z" fill="#222"/>
    <!-- persp/outliner/graph -->
    <rect x="8" y="598" width="13.500" height="13.500" fill="#cfcfcf"/><path d="M11.5 604.7L14.7 602.5L17.9 604.7L14.7 606.9000000000001Z" fill="#222"/>
    <rect x="23.500" y="598.500" width="12.500" height="12.500" fill="#303030" stroke="#cfcfcf" stroke-width="1"/><rect x="26" y="601" width="5" height="3" fill="none" stroke="#45b5b8" stroke-width=".9"/><rect x="28.500" y="605.500" width="5" height="3" fill="none" stroke="#cfcfcf" stroke-width=".9"/>
    <rect x="8.500" y="614.500" width="27" height="11.500" fill="#303030" stroke="#cfcfcf" stroke-width="1"/><path d="M11 618H14M11 620.500H14M11 623H14" stroke="#cfcfcf" stroke-width=".9"/><path d="M15.500 622.500Q19 614.500 22.500 620.500T29 621L33 618" fill="none" stroke="#45b5b8" stroke-width="1.100"/><path d="M17 621.500H26M21.500 618V625" stroke="#cfcfcf" stroke-width=".9"/>
    <path d="M20 646H24.500L22.200 648.500Z" fill="#cfcfcf"/>
    <!-- maya logo -->
    <path d="M6.500 894L21.500 883.500L23 884V905L11.500 913.500H6.500Z" fill="#1f9da3"/><path d="M39 894L23 883.500V905L33 913.500H39Z" fill="#167f87"/>
    <path d="M6.500 894L12.500 900V913.500H6.500Z" fill="#3fe0e0"/><path d="M39 894L33 900V913.500H39Z" fill="#27b5ba"/>
    <path d="M13 895L22.500 886L32 895L27.500 902L22.500 897L17.500 902Z" fill="#0f6a72"/><path d="M22.500 886L28 895L22.500 904L17 895Z" fill="#1a929a"/>
    <path d="M16 902.500L22.500 908L29 902.500L27 907L22.500 912.500L18 907Z" fill="#35cfd2"/><path d="M16 902.500L19.500 899L22.500 903.500L25.500 899L29 902.500L22.500 909Z" fill="#2bbcc0"/>
  </svg>
</div>

<!-- VIEWPORT PANEL -->
<div id="vp">
  <div class="a" style="left:44px;top:121px;width:1640px;height:799px;background:#2c2e31"></div><div class="a" style="left:45px;top:122px;width:1637px;height:796px;background:#444;border-left:2px solid #7f8388;border-top:1px solid #858585;border-right:1px solid #858585;border-bottom:1px solid #8b9093"></div>
  <div class="a" id="view" style="left:47px;top:162px;width:1634px;height:755px;background:linear-gradient(#313740 0.00%,#3a4048 6.25%,#41484f 12.50%,#474f56 18.75%,#4d555b 25.00%,#525b61 31.25%,#576066 37.50%,#5c656b 43.75%,#606a6f 50.00%,#646e74 56.25%,#687378 62.50%,#6c777c 68.75%,#707b80 75.00%,#737e84 81.25%,#778287 87.50%,#7a868b 93.75%,#7d898e 100.00%);overflow:hidden"><svg style="left:0;top:0" width="1635" height="756" viewBox="0 0 1635 756">
<defs>
<linearGradient id="gb" x1="0" x2="1" y1="0" y2="0"><stop offset="0" stop-color="#252525"/><stop offset=".7" stop-color="#2b2b2b"/><stop offset=".86" stop-color="#343434"/><stop offset=".97" stop-color="#1e1e1e"/><stop offset="1" stop-color="#1c1c1c"/></linearGradient>
<linearGradient id="gs" x1="0" x2="1" y1="0" y2="0"><stop offset="0" stop-color="#1e1e1e"/><stop offset=".25" stop-color="#2c2c2c"/><stop offset=".8" stop-color="#303030"/><stop offset="1" stop-color="#2a2a2a"/></linearGradient>
<linearGradient id="gr" x1="0" x2="0" y1="0" y2="1"><stop offset="0" stop-color="#cf211c"/><stop offset="1" stop-color="#c21e1a"/></linearGradient>
<linearGradient id="gk" x1="0" x2="1" y1="0" y2="0"><stop offset="0" stop-color="#c82a26"/><stop offset=".2" stop-color="#e0403a"/><stop offset=".8" stop-color="#dc3a35"/><stop offset="1" stop-color="#b82420"/></linearGradient>
</defs>
<path d="M753.4 600.3L511.4 725.4M753.4 600.3L1085.7 670.4M765.6 602.9L524.9 729.4M745.2 604.6L1079.3 675.9M778.0 605.5L538.6 733.4M736.8 608.9L1072.8 681.5M790.4 608.1L552.5 737.5M728.3 613.3L1066.2 687.2M803.0 610.8L566.6 741.6M719.6 617.8L1059.5 693.0M815.7 613.4L580.8 745.8M710.8 622.3L1052.6 698.9M828.6 616.2L595.3 750.0M701.9 626.9L1045.6 704.9M841.6 618.9L609.9 754.3M692.8 631.6L1038.4 711.1M854.7 621.7L629.2 756.0M683.6 636.4L1031.2 717.3M868.0 624.5L651.4 756.0M674.2 641.2L1023.7 723.7M881.4 627.3L673.6 756.0M664.6 646.2L1016.2 730.2M895.0 630.1L695.8 756.0M654.9 651.2L1008.4 736.9M922.6 636.0L740.3 756.0M635.0 661.5L992.5 750.5M936.6 638.9L762.6 756.0M624.7 666.8L978.0 756.0M950.8 641.9L784.9 756.0M614.3 672.2L941.6 756.0M965.1 644.9L807.2 756.0M603.7 677.7L905.2 756.0M979.6 648.0L829.5 756.0M592.9 683.3L868.9 756.0M994.2 651.1L851.9 756.0M581.9 688.9L832.6 756.0M1009.0 654.2L874.2 756.0M570.7 694.7L796.3 756.0M1024.0 657.4L896.6 756.0M559.3 700.6L760.1 756.0M1039.2 660.6L919.0 756.0M547.6 706.6L724.0 756.0M1054.5 663.8L941.4 756.0M535.8 712.8L687.8 756.0M1070.0 667.1L963.8 756.0M523.7 719.0L651.7 756.0M1085.7 670.4L986.2 756.0M511.4 725.4L615.7 756.0" stroke="#323d40" stroke-width="1.1" fill="none"/><path d="M908.7 633.0L718.1 756.0M645.0 656.3L1000.6 743.6" stroke="#2e383b" stroke-width="2.2" fill="none"/>
<!-- coin box -->
<path d="M 823.0 42.0 L 866.7 45.0 Q 879.0 47.0 885.0 52.5 Q 891.0 58.0 894.4 65.6 Q 898.5 73.0 899.0 80.0 Q 899.0 90.0 897.7 98.0 L 894.4 106.3 L 889.5 108.5 L 888.0 124.0 L 884.7 147.0 L 879.8 163.3 Q 877.0 171.0 873.3 176.3 Q 869.0 181.5 861.9 182.0 L 839.0 180.4 L 833.0 188.0 L 819.0 138.0 Z" fill="url(#gs)"/>
<path d="M 837.0 106.0 L 894.4 106.3 L 889.5 108.5 L 866.0 108.7 L 866.0 129.0 L 837.0 138.0 Z" fill="#262626"/>
<path d="M 854.5 128.3 L 866.0 129.0 Q 869.0 132.0 869.5 137.0 L 870.0 163.0 Q 869.0 171.0 866.7 176.0 Q 863.0 181.5 858.6 182.0 L 839.9 180.0 L 839.9 150.0 Q 841.0 144.0 845.6 140.5 Z" fill="#484848"/>
<path d="M 841.5 150.0 Q 843.0 143.0 848.0 139.0 L 858.0 138.0 L 858.0 181.8 L 839.9 180.0 Z" fill="#3e3e3e"/>
<path d="M 847.0 143.0 L 856.0 142.0 Q 858.0 146.0 857.8 151.0 Q 857.5 156.0 855.5 158.4 L 846.0 157.5 Z" fill="#c6221e"/><ellipse cx="847.3" cy="150.3" rx="3" ry="7" fill="#150c0c" transform="rotate(8 847.3 150.3)"/>
<path d="M 753.0 42.5 L 825.0 42.5 Q 837.0 43.0 837.5 58.0 L 839.0 138.0 Q 839.0 173.0 835.0 188.0 Q 831.0 194.0 821.0 193.5 Q 809.0 193.5 806.0 188.0 Q 803.0 183.0 802.0 178.0 L 800.0 188.0 L 759.0 188.0 Q 753.0 181.0 748.0 165.0 Q 740.0 138.0 736.5 108.0 Q 734.5 78.0 736.5 63.0 Q 738.0 44.0 753.0 42.5 Z" fill="url(#gb)"/>
<rect x="761" y="174" width="11" height="13" fill="#4a4e50"/>
<rect x="741" y="54" width="76" height="59" rx="6" fill="url(#gr)"/>
<path d="M 756.0 64.0 Q 759.0 62.5 765.0 63.0 L 795.0 63.0 Q 801.0 64.0 801.0 72.0 L 800.5 100.0 Q 799.0 108.0 791.0 108.5 L 763.0 108.5 Q 755.0 107.0 754.5 98.0 Z" fill="#c92520"/>
<path d="M 766.0 63.0 L 795.0 63.0 Q 800.0 64.0 800.5 70.0 L 789.0 74.0 L 773.0 74.0 Z" fill="#b41d19"/>
<rect x="755" y="74" width="45.500" height="5" fill="#971a17"/>
<path d="M 755.0 100.0 Q 757.0 108.0 765.0 108.5 L 791.0 108.5 Q 799.0 107.0 800.5 100.0 Q 793.0 104.0 778.0 104.0 Q 763.0 104.0 755.0 100.0 Z" fill="#d3302b"/>
<rect x="817.5" y="58" width="1.800" height="54" rx=".9" fill="#8a8a8a" opacity=".6"/>
<!-- chain top -->
<circle cx="785" cy="155" r="6" fill="none" stroke="#0f0f0f" stroke-width="4.500"/><path d="M782 149A6.500 6.500 0 0 1 790.5 156" stroke="#3a3a3a" stroke-width="1" fill="none"/>
<rect x="759.5" y="128" width="31" height="5.500" rx="2.700" fill="#0a0a0a"/>
<rect x="769.5" y="123.5" width="8.500" height="41" rx="4.200" fill="none" stroke="#0a0a0a" stroke-width="4.500"/>
<rect x="775.5" y="128" width="1.200" height="32" fill="#4a4a4a" opacity=".7"/>
<rect x="760.5" y="163.8" width="25.3" height="40.5" rx="10.4" fill="none" stroke="#0c0c0c" stroke-width="7.5"/><rect x="759.7" y="162.9" width="26.9" height="42.1" rx="11.2" fill="none" stroke="#2e2e2e" stroke-width="1.2" opacity=".8"/><rect x="763.2" y="198.2" width="16.9" height="42.9" rx="6.9" fill="none" stroke="#0c0c0c" stroke-width="6.5"/><rect x="762.5" y="197.4" width="18.5" height="44.5" rx="7.7" fill="none" stroke="#2e2e2e" stroke-width="1.2" opacity=".8"/><rect x="761.0" y="236.5" width="22.5" height="38.0" rx="9.2" fill="none" stroke="#0c0c0c" stroke-width="7"/><rect x="760.2" y="235.7" width="24.1" height="39.6" rx="10.0" fill="none" stroke="#2e2e2e" stroke-width="1.2" opacity=".8"/><rect x="768.4" y="270.6" width="8.4" height="42.9" rx="3.4" fill="none" stroke="#0c0c0c" stroke-width="6.3"/><rect x="767.6" y="269.8" width="10.0" height="44.5" rx="4.2" fill="none" stroke="#2e2e2e" stroke-width="1.2" opacity=".8"/><rect x="763.1" y="309.0" width="21.2" height="39.5" rx="8.7" fill="none" stroke="#0c0c0c" stroke-width="7"/><rect x="762.3" y="308.2" width="22.8" height="41.1" rx="9.5" fill="none" stroke="#2e2e2e" stroke-width="1.2" opacity=".8"/><rect x="769.0" y="343.0" width="12.3" height="40.7" rx="5.0" fill="none" stroke="#0c0c0c" stroke-width="6"/><rect x="768.2" y="342.2" width="13.9" height="42.3" rx="5.8" fill="none" stroke="#2e2e2e" stroke-width="1.2" opacity=".8"/><rect x="767.8" y="378.6" width="16.8" height="41.9" rx="6.9" fill="none" stroke="#0c0c0c" stroke-width="6.5"/><rect x="767.0" y="377.8" width="18.4" height="43.5" rx="7.7" fill="none" stroke="#2e2e2e" stroke-width="1.2" opacity=".8"/><rect x="768.0" y="413.5" width="17.1" height="30.0" rx="7.0" fill="none" stroke="#0c0c0c" stroke-width="7"/><rect x="767.2" y="412.7" width="18.7" height="31.6" rx="7.8" fill="none" stroke="#2e2e2e" stroke-width="1.2" opacity=".8"/><rect x="765.4" y="448.5" width="23.1" height="39.0" rx="9.5" fill="none" stroke="#0c0c0c" stroke-width="7"/><rect x="764.6" y="447.7" width="24.7" height="40.6" rx="10.3" fill="none" stroke="#2e2e2e" stroke-width="1.2" opacity=".8"/><rect x="773.0" y="478.8" width="8.0" height="47.5" rx="4.0" fill="#0c0c0c"/><rect x="775.4" y="483.8" width="1.2" height="37.5" fill="#303030" opacity=".8"/><rect x="766.5" y="516.9" width="21.2" height="34.4" rx="8.7" fill="none" stroke="#0c0c0c" stroke-width="7"/><rect x="765.7" y="516.1" width="22.8" height="36.0" rx="9.5" fill="none" stroke="#2e2e2e" stroke-width="1.2" opacity=".8"/><rect x="767.1" y="550.5" width="21.4" height="36.8" rx="8.8" fill="none" stroke="#0c0c0c" stroke-width="7"/><rect x="766.3" y="549.7" width="23.0" height="38.4" rx="9.6" fill="none" stroke="#2e2e2e" stroke-width="1.2" opacity=".8"/><rect x="773.0" y="578.7" width="8.7" height="46.7" rx="4.4" fill="#0c0c0c"/><rect x="775.6" y="583.7" width="1.2" height="36.7" fill="#303030" opacity=".8"/>
<!-- key -->
<path d="M765.5 632V626Q766 616.5 777.5 616.5Q789.5 616.5 789.5 626V632" fill="none" stroke="#0c0c0c" stroke-width="5.500"/>
<rect x="773" y="579" width="8.500" height="46.500" rx="4.200" fill="#0c0c0c"/>
<path d="M 760.0 691.0 L 795.0 691.0 L 795.0 723.0 Q 795.0 726.5 791.0 726.5 L 760.0 726.5 Z" fill="#0b0b0b"/>
<path d="M 770.5 718.0 L 770.5 706.0 L 774.0 702.0 L 781.0 702.0 L 784.5 706.0 L 784.5 718.0 Z" fill="#6f7f84"/>
<path d="M 763.0 630.5 Q 777.0 627.5 792.0 630.5 Q 797.0 632.0 798.0 641.0 L 799.5 673.0 L 798.5 688.0 Q 798.0 691.5 794.0 691.5 L 761.0 691.5 Q 756.5 691.5 756.5 687.0 L 755.8 658.0 L 757.5 640.0 Q 758.0 632.0 763.0 630.5 Z" fill="url(#gk)"/>
<path d="M 767.0 638.0 L 788.0 638.0 Q 790.5 638.5 791.0 642.0 L 792.5 672.0 Q 792.5 676.0 788.0 676.5 L 765.0 676.5 Q 762.5 676.0 762.5 672.0 L 764.0 642.0 Q 764.5 638.5 767.0 638.0 Z" fill="#e65a54"/>
<g fill="#d2403a" opacity=".85"><rect x="766.5" y="643.5" width="22" height="2.600"/><rect x="766" y="651" width="23" height="2.600"/><rect x="765.5" y="658.5" width="24" height="2.600"/><rect x="765.5" y="666" width="24" height="2.600"/></g>
<path d="M 757.0 678.0 L 799.0 678.0 L 798.5 688.0 Q 798.0 691.5 794.0 691.5 L 761.0 691.5 Q 756.5 691.5 756.5 687.0 Z" fill="#cf2f2a" opacity=".7"/>
<path d="M 774.0 691.0 L 781.0 691.0 L 779.5 695.0 L 775.5 695.0 Z" fill="#d6332e"/>
<!-- locator -->
<path d="M811 366V401M795 382L826 386M799 387L822 381" stroke="#1d5e36" stroke-width="1" fill="none" opacity=".9"/>
<!-- axis -->
<path d="M25 729V710" stroke="#3fe04a" stroke-width="1.200"/><path d="M25 729L37 730.5" stroke="#e04a30" stroke-width="1.200"/><path d="M25 729L18 731" stroke="#1a1ab0" stroke-width="1.200"/>
<text x="22.5" y="713" font-size="9" font-weight="bold" fill="#3fe04a" font-family="Liberation Sans, sans-serif">y</text>
<text x="37" y="729" font-size="9" font-weight="bold" fill="#e03030" font-family="Liberation Sans, sans-serif">x</text>
<text x="15" y="730" font-size="9" font-weight="bold" fill="#1a1ab0" font-family="Liberation Sans, sans-serif">z</text>
<g font-family="Liberation Sans, sans-serif" font-size="10" font-weight="bold" fill="#f2f2f2">
<text x="796" y="746" textLength="28">persp</text>
<text x="1489" y="727" textLength="49.500">Symmetry:</text><text x="1603.5" y="727" textLength="13.500">Off</text>
<text x="1489" y="747.4" textLength="54.500">Soft Select:</text><text x="1603.5" y="747.4" textLength="13.500">Off</text>
</g>
</svg></div>
  <span class="t" style="left:55px;top:125px;font-size:11.500px;color:#d4d4d4;letter-spacing:.15px">View</span>
  <span class="t" style="left:95px;top:125px;font-size:11.500px;color:#d4d4d4;letter-spacing:.15px">Shading</span>
  <span class="t" style="left:153px;top:125px;font-size:11.500px;color:#d4d4d4;letter-spacing:.15px">Lighting</span>
  <span class="t" style="left:211px;top:125px;font-size:11.500px;color:#d4d4d4;letter-spacing:.15px">Show</span>
  <span class="t" style="left:256px;top:125px;font-size:11.500px;color:#d4d4d4;letter-spacing:-.1px">Renderer</span>
  <span class="t" style="left:318px;top:125px;font-size:11.500px;color:#d4d4d4;letter-spacing:-.3px">Panels</span>
  <div class="a" style="left:189px;top:142px;width:19px;height:19px;background:#5285b6;border-radius:2px"></div>
  <div class="a" style="left:361px;top:142px;width:19px;height:19px;background:#5285b6;border-radius:2px"></div>
  <div class="a" style="left:422px;top:142px;width:19px;height:19px;background:#5285b6;border-radius:2px"></div>
  <div class="a" style="left:250px;top:142px;width:19px;height:19px;background:#3a3a3a;border:1px solid #303030;border-radius:2px"></div>
  <div class="a" style="left:553px;top:142px;width:19px;height:19px;background:#3a3a3a;border:1px solid #303030;border-radius:2px"></div>
  <div class="a" style="left:812px;top:142px;width:20px;height:19px;background:#5a9bc2;border-radius:2px"></div>
  <div class="fld" style="left:710px;top:143px;width:37px;height:15px"></div>
  <div class="fld" style="left:772px;top:143px;width:37px;height:15px"></div>
  <div class="a" style="left:835px;top:142px;width:138px;height:17px;background:#5d5d5d;border-radius:2px"></div>
  <div class="a" style="left:953px;top:142px;width:20px;height:17px;background:#646464;border-radius:0 2px 2px 0"></div>
  <span class="t" style="left:715px;top:144px;font-size:11px;color:#d4d4d4">0.00</span>
  <span class="t" style="left:777px;top:144px;font-size:11px;color:#d4d4d4">1.00</span>
  <span class="t" style="left:838px;top:144px;font-size:11px;color:#e4e4e4;letter-spacing:-.05px">sRGB gamma</span>
  <svg style="left:0;top:0" width="1000" height="170">
    <rect x="50.0" y="144" width="1" height="17" fill="#8c8c8c"/><rect x="49.0" y="148" width="3" height="9" rx="1.5" fill="#8c8c8c"/><rect x="181.5" y="144" width="1" height="17" fill="#8c8c8c"/><rect x="180.5" y="148" width="3" height="9" rx="1.5" fill="#8c8c8c"/><rect x="333.0" y="144" width="1" height="17" fill="#8c8c8c"/><rect x="332.0" y="148" width="3" height="9" rx="1.5" fill="#8c8c8c"/><rect x="485.0" y="144" width="1" height="17" fill="#8c8c8c"/><rect x="484.0" y="148" width="3" height="9" rx="1.5" fill="#8c8c8c"/><rect x="576.5" y="144" width="1" height="17" fill="#8c8c8c"/><rect x="575.5" y="148" width="3" height="9" rx="1.5" fill="#8c8c8c"/><rect x="607.5" y="144" width="1" height="17" fill="#8c8c8c"/><rect x="606.5" y="148" width="3" height="9" rx="1.5" fill="#8c8c8c"/><rect x="678.5" y="144" width="1" height="17" fill="#8c8c8c"/><rect x="677.5" y="148" width="3" height="9" rx="1.5" fill="#8c8c8c"/>
    <path d="M959.500 148.500H968.500L964 153.500Z" fill="#dcdcdc"/>
    <!-- camera icons -->
    <g fill="#d6d6d6"><rect x="60" y="147" width="9.500" height="8.500" rx="1"/><path d="M70 151.200L74 147.500V155L70 151.200Z"/>
    <rect x="84.500" y="147" width="6.500" height="8" rx="1"/><path d="M91 151.200L94.500 147.500V155Z"/>
    <path d="M104.500 146H110.500V157.500L107.500 154.500L104.500 157.500Z"/></g>
    <circle cx="83.500" cy="153.500" r="2.300" fill="#444" stroke="#45b5b8" stroke-width="1.700"/><circle cx="83.500" cy="148" r="1.500" fill="#45b5b8"/>
    <path d="M127.500 145L131.500 144.500V155L127.500 156.500Z" fill="#45b5b8"/><path d="M125.500 149.500L122 158H131L134 154.500H124.500" fill="none" stroke="#d6d6d6" stroke-width="1.100"/>
    <path d="M146.500 144V153M142 151H150M146.500 144L145 146H148Z" stroke="#d6d6d6" stroke-width="1.100" fill="#d6d6d6"/><circle cx="151.500" cy="153" r="2.200" fill="none" stroke="#45b5b8" stroke-width="1.300"/><path d="M149.800 154.700L146.500 158" stroke="#45b5b8" stroke-width="1.500"/>
    <path d="M171.500 146L163.500 154.500" stroke="#d6d6d6" stroke-width="3" stroke-linecap="round"/><path d="M162 155.500L163.500 157" stroke="#45b5b8" stroke-width="2"/><path d="M168 157.500H173V154" stroke="#d6d6d6" fill="none" stroke-width="1"/>
    <!-- grid -->
    <rect x="193" y="146" width="11.500" height="11.500" fill="#2d2d2d" stroke="#d6d6d6" stroke-width="1.300"/><path d="M196.800 146V157.500M200.600 146V157.500M193 149.800H204.500M193 153.600H204.500" stroke="#d6d6d6" stroke-width="1"/>
    <rect x="212.500" y="146.500" width="13" height="11" fill="none" stroke="#d6d6d6" stroke-width="1.100"/><rect x="213" y="149" width="12" height="6" fill="#2d2d2d"/><path d="M213 148H225.500M213 156H225.500" stroke="#d6d6d6" stroke-width="1.300" stroke-dasharray="1.300 1.100"/>
    <rect x="232.500" y="146.500" width="13" height="11" fill="#2d2d2d" stroke="#d6d6d6" stroke-width="1.100"/><circle cx="239" cy="152" r="2.700" fill="#45b5b8"/>
    <circle cx="259.500" cy="151.500" r="4" fill="#2e2e2e" stroke="#454545" stroke-width="1.500"/>
    <rect x="272.500" y="146.500" width="13" height="11" fill="#2d2d2d" stroke="#d6d6d6" stroke-width="1.100"/><path d="M279 146.500V157.500M273 150H285.500M274 153.500H284" stroke="#45b5b8" stroke-width=".9" stroke-dasharray="1.200 1"/>
    <rect x="292.500" y="146.500" width="13" height="11" fill="#2d2d2d" stroke="#d6d6d6" stroke-width="1.100"/><path d="M295 155.500L298 151L301 155.500Z" fill="#45b5b8"/><circle cx="301.500" cy="150.500" r="1.700" fill="#d6d6d6"/>
    <rect x="312.500" y="146.500" width="13" height="11" fill="#2d2d2d" stroke="#d6d6d6" stroke-width="1.100"/><path d="M316 149H322.500V151H320.300V155.500H318.200V151H316Z" fill="#45b5b8"/>
    <!-- cubes -->
    <path d="M350 144.500L356.500 148V155.500L350 159L343.500 155.500V148Z M343.500 148L350 151.500L356.500 148M350 151.500V159" fill="none" stroke="#45b5b8" stroke-width="1.300"/>
    <path d="M370.500 144.500L377 148L370.500 151.500L364 148Z" fill="#e4e4e4"/><path d="M364 148L370.500 151.500V159L364 155.500Z" fill="#9a9a9a"/><path d="M377 148L370.500 151.500V159L377 155.500Z" fill="#6a6a6a"/><path d="M370.500 144.500L377 148V155.500L370.500 159L364 155.500V148Z" fill="none" stroke="#3a3a3a" stroke-width=".7"/>
    <path d="M391 145A7 7 0 0 0 391 159Z" fill="#d6d6d6"/><g fill="#d6d6d6"><rect x="391" y="146" width="2.500" height="2.500"/><rect x="393.500" y="148.500" width="2.500" height="2.500"/><rect x="391" y="151" width="2.500" height="2.500"/><rect x="393.500" y="153.500" width="2.500" height="2.500"/><rect x="391" y="156" width="2.500" height="2.500"/><rect x="396" y="151" width="2" height="2.500"/><rect x="396" y="146.500" width="1.500" height="2"/></g>
    <path d="M410.500 144.500L417 148V155.500L410.500 159L404 155.500V148Z M404 148L410.500 151.500L417 148M410.500 151.500V159" fill="#3d6f74" stroke="#45b5b8" stroke-width="1.200"/><path d="M407 150L410.500 148.300L414 150L410.500 152Z M407.500 154L410.500 155.500L413.500 154" fill="none" stroke="#8fd6d6" stroke-width=".8"/>
    <circle cx="431.500" cy="151.500" r="6.800" fill="#e6e6e6"/><g fill="#1e1e1e"><path d="M427 147H431.500V151.500H427Z M431.500 151.500H436V156H431.500Z"/><path d="M431.500 144.800V147H435Q433.500 145.300 431.500 144.800Z M436 147H431.500 436V151.500H438.200Q438.200 149 436 147Z M427 151.500V156H425.500Q424.600 154 424.800 151.500Z M431.500 156V158.200Q429 158 427 156Z"/></g>
    <path d="M451.500 146.500A3.800 3.800 0 0 1 453.500 153.500V157H449.500V153.500A3.800 3.800 0 0 1 451.500 146.500Z" fill="#d6d6d6"/><path d="M451.500 143V144.500M446 146L447.200 147M457 146L455.800 147M444.800 151H446.300M456.700 151H458.200" stroke="#d6d6d6" stroke-width="1"/>
    <circle cx="473.500" cy="151" r="5.500" fill="#45b5b8"/><path d="M464.500 154L469 158.500M466 152L471 157" stroke="#d6d6d6" stroke-width="1.400"/>
    <path d="M497 150A5.500 5.500 0 0 1 508 150Q508 153 506.500 154V157.500H498.500V154Q497 153 497 150Z" fill="#9aa4a6"/><circle cx="500.300" cy="151.500" r="1.400" fill="#444"/><circle cx="504.700" cy="151.500" r="1.400" fill="#444"/><path d="M497 157L508 154.500M497 154.500L508 157" stroke="#5f9ea0" stroke-width="1"/>
    <circle cx="523.500" cy="151.500" r="5.300" fill="#d6d6d6"/><path d="M517.500 146.500A7 7 0 0 0 517.500 156.500M515 147.500A6 6 0 0 0 515 155.500" fill="none" stroke="#d6d6d6" stroke-width="1.200"/>
    <circle cx="542.500" cy="151.500" r="5.300" fill="none" stroke="#45b5b8" stroke-width="2"/><path d="M542.500 146.200A5.300 5.300 0 0 0 542.500 156.800" fill="none" stroke="#d6d6d6" stroke-width="2" stroke-dasharray="1.800 1.500"/>
    <rect x="558" y="149" width="7" height="7" fill="#3d5a5f"/><rect x="561" y="146.500" width="6.500" height="6.500" fill="#454d4f"/>
    <rect x="587" y="145.500" width="8.500" height="8" fill="none" stroke="#45b5b8" stroke-width="1.300" stroke-dasharray="1.800 1.400"/><path d="M594 149.500V159L596.300 157L598 160.500L599.500 159.800L597.900 156.500L600.800 156.200Z" fill="#d6d6d6" stroke="#444" stroke-width=".4"/>
    <rect x="622" y="146" width="8.500" height="8" fill="#d6d6d6"/><rect x="618.500" y="149.500" width="8.500" height="8" fill="#d6d6d6" stroke="#444" stroke-width="1"/><rect x="620.500" y="151.500" width="4.500" height="4" fill="#444"/><rect x="624.500" y="148" width="4" height="2" fill="#444"/>
    <rect x="642" y="146" width="8.500" height="8" fill="none" stroke="#d6d6d6" stroke-width="1.100"/><rect x="645" y="148.500" width="3" height="2.500" fill="#d6d6d6"/><path d="M638.500 150H642V154H646.500V157.500H638.500Z" fill="#45b5b8"/>
    <rect x="659.500" y="146" width="11.500" height="11.500" fill="#2d2d2d" stroke="#d6d6d6" stroke-width="1.100"/><circle cx="663.500" cy="150" r="1.500" fill="#45b5b8"/><path d="M664 150.500L668.500 155" stroke="#45b5b8" stroke-width="1.400"/>
    <path d="M693.5 142.5H690V159.5H693.5M703.0 142.5H706.5V159.5H703.0" fill="none" stroke="#0a0a0a" stroke-width="3.6"/><path d="M693.5 142.5H690V159.5H693.5M703.0 142.5H706.5V159.5H703.0" fill="none" stroke="#3fe03f" stroke-width="2"/><circle cx="698.300" cy="151" r="5.600" fill="#d6d6d6"/><path d="M698.300 145.400L700 150L703.800 151.500L699.500 153L698.300 156.600L696.800 152.500L692.800 151L697 149.500Z" fill="#2a2a2a"/>
    <path d="M755.5 142.5H752V159.5H755.5M765.0 142.5H768.5V159.5H765.0" fill="none" stroke="#0a0a0a" stroke-width="3.6"/><path d="M755.5 142.5H752V159.5H755.5M765.0 142.5H768.5V159.5H765.0" fill="none" stroke="#3fe03f" stroke-width="2"/><path d="M760.300 145.500A5.600 5.600 0 0 0 760.300 156.700Z" fill="#d6d6d6"/><path d="M760.300 145.500A5.600 5.600 0 0 1 760.300 156.700" fill="none" stroke="#d6d6d6" stroke-width="1.200"/><circle cx="760.300" cy="151" r="2.500" fill="#2a2a2a"/>
    <circle cx="822" cy="151.500" r="6.500" fill="#3fb4b8" stroke="#2a7d86" stroke-width="1"/>
    <text x="817.300" y="153.800" font-size="5.800" font-weight="bold" fill="#1d5d66" font-family="Liberation Sans, sans-serif" textLength="9.500">ON</text>
  </svg>
</div>

<!-- RIGHT PANELS -->
<div id="right">
  <!-- outliner frame -->
    <div class="a" style="left:1689px;top:153px;width:222px;height:528px;background:#444;border:1px solid #555;border-top:0"></div>
  <div class="a" style="left:1690px;top:123px;width:221px;height:30px;background:#fff"></div>
  <span class="t" style="left:1720px;top:131px;font-size:12px;color:#999">Outliner</span>
  <span class="t" style="left:1700px;top:157px;font-size:11.500px;color:#d8d8d8;letter-spacing:.15px">Display</span>
  <span class="t" style="left:1753px;top:157px;font-size:11.500px;color:#d8d8d8;letter-spacing:.15px">Show</span>
  <span class="t" style="left:1797px;top:157px;font-size:11.500px;color:#d8d8d8;letter-spacing:.15px">Help</span>
  <div class="fld" style="left:1719px;top:177px;width:188px;height:17px"></div>
  <div class="a" style="left:1693px;top:203px;width:203px;height:457px;background:#2b2b2b;overflow:hidden">
    <span class="t" style="left:64px;top:3px;font-size:11.500px;color:#7e7e7e;letter-spacing:.3px">persp</span>
    <span class="t" style="left:64px;top:23px;font-size:11.500px;color:#7e7e7e;letter-spacing:.3px">top</span>
    <span class="t" style="left:64px;top:43px;font-size:11.500px;color:#7e7e7e;letter-spacing:.3px">front</span>
    <span class="t" style="left:64px;top:63px;font-size:11.500px;color:#7e7e7e;letter-spacing:.3px">side</span>
    <span class="t" style="left:64px;top:83px;font-size:11.500px;color:#dcdcdc;letter-spacing:-.07px">Shopping_Cart_Coin_Deposit_System</span>
    <span class="t" style="left:64px;top:103px;font-size:11.500px;color:#dcdcdc;letter-spacing:.16px">defaultLightSet</span>
    <span class="t" style="left:64px;top:123px;font-size:11.500px;color:#dcdcdc;letter-spacing:.14px">defaultObjectSet</span>
  </div>
  <div class="a" style="left:1896px;top:203px;width:12px;height:457px;background:#393939"></div>
  <div class="a" style="left:1897px;top:215px;width:10px;height:431px;background:#5d5d5d;border-radius:5px"></div>
  <div class="a" style="left:1693px;top:660px;width:203px;height:12px;background:#373737"></div>
  <div class="a" style="left:1896px;top:660px;width:12px;height:12px;background:#2b2b2b"></div>
  <div class="a" style="left:1706px;top:661px;width:118px;height:10px;background:#5d5d5d;border-radius:5px"></div>
  <div class="a" style="left:1692px;top:682px;width:214px;height:6px;background:#2b2b2b"></div>
  <div class="a" style="left:1689px;top:689px;width:222px;height:1px;background:#505050"></div>
  <!-- layer editor -->
  <div class="a" style="left:1691px;top:699px;width:62px;height:21px;background:linear-gradient(#6b6b6b,#757575);border-radius:2px 2px 0 0"></div>
  <div class="a" style="left:1754px;top:700px;width:59px;height:20px;background:#3b3b3b;border-radius:2px 2px 0 0"></div>
  <div class="a" style="left:1815px;top:700px;width:48px;height:20px;background:#3b3b3b;border-radius:2px 2px 0 0"></div>
  <div class="a" style="left:1691px;top:720px;width:216px;height:196px;background:#444;border:1px solid #555"></div>
  <span class="t" style="left:1703px;top:703px;font-size:11.500px;color:#f0f0f0;letter-spacing:.15px;font-weight:bold;transform:scaleX(.93);transform-origin:0 0">Display</span>
  <span class="t" style="left:1765px;top:704px;font-size:11.500px;color:#b8b8b8;letter-spacing:.3px">Render</span>
  <span class="t" style="left:1826px;top:704px;font-size:11.500px;color:#b8b8b8;letter-spacing:.3px">Anim</span>
  <span class="t" style="left:1702px;top:726px;font-size:11.500px;color:#d8d8d8;letter-spacing:.15px">Layers</span>
  <span class="t" style="left:1749px;top:726px;font-size:11.500px;color:#d8d8d8;letter-spacing:.15px">Options</span>
  <span class="t" style="left:1806px;top:726px;font-size:11.500px;color:#d8d8d8;letter-spacing:.15px">Help</span>
  <div class="a" style="left:1695px;top:769px;width:208px;height:132px;background:#2b2b2b;overflow:hidden">
    <div class="a" style="left:4px;top:3px;width:20px;height:15px;background:#272727;border:1px solid #363636;border-radius:3px"></div>
    <div class="a" style="left:27px;top:3px;width:20px;height:15px;background:#272727;border:1px solid #363636;border-radius:3px"></div>
    <div class="a" style="left:51px;top:3px;width:20px;height:15px;background:#272727;border:1px solid #363636;border-radius:3px"></div>
    <span class="t" style="left:10px;top:4px;font-size:11px;color:#e4e4e4">V</span>
    <span class="t" style="left:34px;top:4px;font-size:11px;color:#e4e4e4">P</span>
    <span class="t" style="left:93px;top:4px;font-size:11.500px;color:#f0f0f0;letter-spacing:-.13px">Shopping_Cart_Coin_Deposit</span>
  </div>
  <div class="a" style="left:1695px;top:901px;width:208px;height:12px;background:#373737"></div>
  <div class="a" style="left:1708px;top:902px;width:105px;height:10px;background:#5d5d5d;border-radius:5px"></div>
  <!-- side tabs -->
  <div class="a" style="left:1911px;top:227px;width:9px;height:150px;background:#5b5b5b"></div>
  <span class="t" style="left:1925px;top:132px;font-size:11.500px;color:#bdbdbd;transform:rotate(90deg);transform-origin:0 0;letter-spacing:.28px">Attribute Editor</span>
  <span class="t" style="left:1925px;top:230px;font-size:11.500px;color:#d8d8d8;transform:rotate(90deg);transform-origin:0 0;letter-spacing:.2px">Channel Box / Layer Editor</span>
  <svg style="left:0;top:0" width="1920" height="920">
    <!-- outliner title icons -->
    <g transform="translate(1695.300 125.500)"><path d="M3.200 10L10.800 5L18.600 10V18.800H3.200Z" fill="#2bbcc2"/><path d="M3.200 10L7 7.500L8.500 13L6.500 18.800H3.200Z" fill="#3fdcd4"/><path d="M10.800 5L18.600 10L15 13L10.800 9L7 13L5.500 8.500Z" fill="#0f7f7c"/><path d="M7 13L10.800 9L15 13L13 18.800H9Z" fill="#14908f"/><path d="M8.500 14.500L10.800 17L13 14.500L14 18.800H7.800Z" fill="#35c8d0"/><path d="M15 13L18.600 10V18.800H14Z" fill="#22aab2"/></g>
    <path d="M1791 137.500H1801" stroke="#8a8a8a" stroke-width="1"/><rect x="1836.500" y="132.500" width="9" height="9" fill="none" stroke="#8a8a8a"/><path d="M1882 132L1892 142M1892 132L1882 142" stroke="#8a8a8a" stroke-width="1"/>
    <path d="M1699 184V181H1702M1708 181H1711V184M1711 190V193H1708M1702 193H1699V190" fill="none" stroke="#5a5a5a" stroke-width="1.200"/><path d="M1698 191L1701 195L1704 191ZM1706 183L1709 179L1712 183Z" fill="#5a5a5a"/>
    <rect x="1738" y="209.0" width="8" height="7" rx=".8" fill="#cfcfcf"/><path d="M1747 212.5L1752 208.5V216.5Z" fill="#cfcfcf"/><rect x="1738" y="229.0" width="8" height="7" rx=".8" fill="#cfcfcf"/><path d="M1747 232.5L1752 228.5V236.5Z" fill="#cfcfcf"/><rect x="1738" y="249.0" width="8" height="7" rx=".8" fill="#cfcfcf"/><path d="M1747 252.5L1752 248.5V256.5Z" fill="#cfcfcf"/><rect x="1738" y="269.0" width="8" height="7" rx=".8" fill="#cfcfcf"/><path d="M1747 272.5L1752 268.5V276.5Z" fill="#cfcfcf"/>
    <rect x="1712.500" y="286.500" width="14" height="13" fill="none" stroke="#d6d6d6" stroke-width="1.200"/><path d="M1715.500 293H1723.500M1719.500 289V297" stroke="#d6d6d6" stroke-width="1.600"/>
    <path d="M1745.500 285.500V300.500M1739.500 289L1751.500 297M1739.500 297L1751.500 289" stroke="#b5a6de" stroke-width="1.700" stroke-linecap="round"/>
    <circle cx="1745.5" cy="313" r="7.6" fill="#2a2a2a" stroke="#8a8a8a" stroke-width="1"/><path d="M1744.5 308L1750.5 309L1750.0 316L1746.0 316Z" fill="#6f9fd0"/><circle cx="1742.7" cy="314.8" r="3.3" fill="#d9cf8a"/><circle cx="1741.9" cy="313.8" r="1.2" fill="#f5f0c8"/><circle cx="1745.5" cy="333" r="7.6" fill="#2a2a2a" stroke="#8a8a8a" stroke-width="1"/><path d="M1744.5 328L1750.5 329L1750.0 336L1746.0 336Z" fill="#6f9fd0"/><circle cx="1742.7" cy="334.8" r="3.3" fill="#d9cf8a"/><circle cx="1741.9" cy="333.8" r="1.2" fill="#f5f0c8"/>
    <path d="M1898 211L1902 206L1906 211Z M1898 650L1902 655L1906 650Z" fill="#c8c8c8"/>
    <path d="M1702 662.500V669.500L1696.500 666Z M1886.500 662.500V669.500L1892 666Z" fill="#c8c8c8"/>
    <path d="M1703.500 903.500V910.500L1698 907Z M1893.500 903.500V910.500L1899 907Z" fill="#c8c8c8"/>
    <!-- layer icons -->
    <g fill="#cfcfcf"><path d="M1809 754L1817 749V759Z"/><path d="M1832 754L1840 749V759Z"/><path d="M1859 754.500L1868 749L1874 752.500L1866 759Z"/><path d="M1884 754.500L1893 749L1898 752.500L1890 759Z"/></g>
    <g fill="#45b5b8"><path d="M1820 749L1823 752.500H1821.500V758H1818.500V752.500H1817Z"/><path d="M1843 758.500L1846 755H1844.500V749.500H1841.500V755H1840Z"/><path d="M1870.500 746.500H1872.500V748.500H1874.500V750.500H1872.500V752.500H1870.500V750.500H1868.500V748.500H1870.500Z"/><circle cx="1894" cy="749.500" r="2.800"/></g>
    <path d="M1770 787L1784 773V787" fill="none" stroke="#cfcfcf" stroke-width="1"/>
  </svg>
</div>

<!-- BOTTOM -->
<div id="bottom">
  <div class="a" style="left:18px;top:923px;width:1636px;height:29px;background:#2b2b2b"></div>
  <div class="a" style="left:27px;top:923px;width:12px;height:29px;background:#5e5e5e"></div>
  <span class="t" style="left:28px;top:936px;font-size:11px;color:#f0f0f0">1</span>
  <span class="t" style="left:82.5px;top:921px;font-size:11px;color:#a4a4a4">5</span><span class="t" style="left:150.0px;top:921px;font-size:11px;color:#a4a4a4">10</span><span class="t" style="left:217.6px;top:921px;font-size:11px;color:#a4a4a4">15</span><span class="t" style="left:285.1px;top:921px;font-size:11px;color:#a4a4a4">20</span><span class="t" style="left:352.6px;top:921px;font-size:11px;color:#a4a4a4">25</span><span class="t" style="left:420.1px;top:921px;font-size:11px;color:#a4a4a4">30</span><span class="t" style="left:487.6px;top:921px;font-size:11px;color:#a4a4a4">35</span><span class="t" style="left:555.2px;top:921px;font-size:11px;color:#a4a4a4">40</span><span class="t" style="left:622.7px;top:921px;font-size:11px;color:#a4a4a4">45</span><span class="t" style="left:690.2px;top:921px;font-size:11px;color:#a4a4a4">50</span><span class="t" style="left:757.7px;top:921px;font-size:11px;color:#a4a4a4">55</span><span class="t" style="left:825.2px;top:921px;font-size:11px;color:#a4a4a4">60</span><span class="t" style="left:892.8px;top:921px;font-size:11px;color:#a4a4a4">65</span><span class="t" style="left:960.3px;top:921px;font-size:11px;color:#a4a4a4">70</span><span class="t" style="left:1027.8px;top:921px;font-size:11px;color:#a4a4a4">75</span><span class="t" style="left:1095.3px;top:921px;font-size:11px;color:#a4a4a4">80</span><span class="t" style="left:1162.8px;top:921px;font-size:11px;color:#a4a4a4">85</span><span class="t" style="left:1230.4px;top:921px;font-size:11px;color:#a4a4a4">90</span><span class="t" style="left:1297.9px;top:921px;font-size:11px;color:#a4a4a4">95</span><span class="t" style="left:1365.4px;top:921px;font-size:11px;color:#a4a4a4">100</span><span class="t" style="left:1432.9px;top:921px;font-size:11px;color:#a4a4a4">105</span><span class="t" style="left:1500.4px;top:921px;font-size:11px;color:#a4a4a4">110</span><span class="t" style="left:1568.0px;top:921px;font-size:11px;color:#a4a4a4">115</span><span class="t" style="left:1635.5px;top:921px;font-size:11px;color:#a4a4a4">120</span>
  <div class="fld" style="left:1661px;top:929px;width:68px;height:18px"></div>
  <span class="t" style="left:1667px;top:932px;font-size:11px;color:#dcdcdc">1</span>
  <div class="fld" style="left:19px;top:960px;width:68px;height:23px"></div>
  <div class="fld" style="left:95px;top:960px;width:68px;height:23px"></div>
  <div class="a" style="left:171px;top:960px;width:1286px;height:23px;background:#3c3c3c;border-radius:2px"></div>
  <div class="a" style="left:177px;top:962px;width:774px;height:20px;background:#606060;border-radius:3px"></div>
  <div class="a" style="left:181px;top:965px;width:14px;height:14px;background:#8f8f8f;border-radius:2px"></div>
  <div class="a" style="left:934px;top:965px;width:14px;height:14px;background:#8f8f8f;border-radius:2px"></div>
  <span class="t" style="left:24px;top:965px;font-size:11px;color:#dcdcdc">1</span>
  <span class="t" style="left:100px;top:965px;font-size:11px;color:#dcdcdc">1</span>
  <span class="t" style="left:198px;top:965px;font-size:11px;color:#dcdcdc">1</span>
  <span class="t" style="left:912px;top:965px;font-size:11px;color:#dcdcdc">120</span>
  <div class="fld" style="left:1464px;top:960px;width:68px;height:23px"></div>
  <div class="fld" style="left:1541px;top:960px;width:68px;height:23px"></div>
  <span class="t" style="left:1469px;top:965px;font-size:11px;color:#dcdcdc">120</span>
  <span class="t" style="left:1546px;top:965px;font-size:11px;color:#dcdcdc">200</span>
  <div class="a" style="left:1631px;top:960px;width:101px;height:24px;background:#444;border:1px solid #545454;border-radius:3px"></div>
  <span class="t" style="left:1637px;top:965px;font-size:11.500px;color:#d6d6d6;letter-spacing:-.05px">No Anim Layer</span>
  <div class="a" style="left:1762px;top:960px;width:101px;height:24px;background:#444;border:1px solid #545454;border-radius:3px"></div>
  <span class="t" style="left:1767px;top:965px;font-size:11.500px;color:#d6d6d6;letter-spacing:-.1px">No Character Set</span>
  <span class="t" style="left:29px;top:999px;font-size:11px;color:#e0e0e0;letter-spacing:0">MEL</span>
  <div class="fld" style="left:64px;top:994px;width:620px;height:23px"></div>
  <div class="a" style="left:686px;top:992px;width:1px;height:27px;background:#555"></div>
  <div class="fld" style="left:691px;top:994px;width:1206px;height:23px"></div>
  <div class="a" style="left:0;top:1021px;width:1920px;height:1px;background:#353535"></div>
  <div class="a" style="left:0;top:1022px;width:1920px;height:1px;background:#4c4c4c"></div>
  <span class="t" style="left:30px;top:1027px;font-size:10px;color:#cfcfcf;letter-spacing:-.15px">Select Tool: select an object</span>
  <svg style="left:0;top:0" width="1920" height="1043">
    <g fill="#6a6a6a"><rect x="7" y="924" width="1.4" height="1.4"/><rect x="10" y="924" width="1.4" height="1.4"/><rect x="7" y="927" width="1.4" height="1.4"/><rect x="10" y="927" width="1.4" height="1.4"/><rect x="7" y="930" width="1.4" height="1.4"/><rect x="10" y="930" width="1.4" height="1.4"/><rect x="7" y="933" width="1.4" height="1.4"/><rect x="10" y="933" width="1.4" height="1.4"/><rect x="7" y="936" width="1.4" height="1.4"/><rect x="10" y="936" width="1.4" height="1.4"/><rect x="7" y="939" width="1.4" height="1.4"/><rect x="10" y="939" width="1.4" height="1.4"/><rect x="7" y="942" width="1.4" height="1.4"/><rect x="10" y="942" width="1.4" height="1.4"/><rect x="7" y="945" width="1.4" height="1.4"/><rect x="10" y="945" width="1.4" height="1.4"/><rect x="7" y="948" width="1.4" height="1.4"/><rect x="10" y="948" width="1.4" height="1.4"/><rect x="7" y="960" width="1.4" height="1.4"/><rect x="10" y="960" width="1.4" height="1.4"/><rect x="7" y="963" width="1.4" height="1.4"/><rect x="10" y="963" width="1.4" height="1.4"/><rect x="7" y="966" width="1.4" height="1.4"/><rect x="10" y="966" width="1.4" height="1.4"/><rect x="7" y="969" width="1.4" height="1.4"/><rect x="10" y="969" width="1.4" height="1.4"/><rect x="7" y="972" width="1.4" height="1.4"/><rect x="10" y="972" width="1.4" height="1.4"/><rect x="7" y="975" width="1.4" height="1.4"/><rect x="10" y="975" width="1.4" height="1.4"/><rect x="7" y="978" width="1.4" height="1.4"/><rect x="10" y="978" width="1.4" height="1.4"/><rect x="7" y="981" width="1.4" height="1.4"/><rect x="10" y="981" width="1.4" height="1.4"/><rect x="7" y="993" width="1.4" height="1.4"/><rect x="10" y="993" width="1.4" height="1.4"/><rect x="7" y="996" width="1.4" height="1.4"/><rect x="10" y="996" width="1.4" height="1.4"/><rect x="7" y="999" width="1.4" height="1.4"/><rect x="10" y="999" width="1.4" height="1.4"/><rect x="7" y="1002" width="1.4" height="1.4"/><rect x="10" y="1002" width="1.4" height="1.4"/><rect x="7" y="1005" width="1.4" height="1.4"/><rect x="10" y="1005" width="1.4" height="1.4"/><rect x="7" y="1008" width="1.4" height="1.4"/><rect x="10" y="1008" width="1.4" height="1.4"/><rect x="7" y="1011" width="1.4" height="1.4"/><rect x="10" y="1011" width="1.4" height="1.4"/><rect x="7" y="1014" width="1.4" height="1.4"/><rect x="10" y="1014" width="1.4" height="1.4"/><rect x="7" y="1027" width="1.4" height="1.4"/><rect x="10" y="1027" width="1.4" height="1.4"/><rect x="7" y="1030" width="1.4" height="1.4"/><rect x="10" y="1030" width="1.4" height="1.4"/><rect x="7" y="1033" width="1.4" height="1.4"/><rect x="10" y="1033" width="1.4" height="1.4"/><rect x="7" y="1036" width="1.4" height="1.4"/><rect x="10" y="1036" width="1.4" height="1.4"/><rect x="7" y="1039" width="1.4" height="1.4"/><rect x="10" y="1039" width="1.4" height="1.4"/></g>
    <g fill="#c4c4c4"><rect x="80.8" y="936" width="1.8" height="15.5"/><rect x="148.3" y="936" width="1.8" height="15.5"/><rect x="215.9" y="936" width="1.8" height="15.5"/><rect x="283.4" y="936" width="1.8" height="15.5"/><rect x="350.9" y="936" width="1.8" height="15.5"/><rect x="418.4" y="936" width="1.8" height="15.5"/><rect x="485.9" y="936" width="1.8" height="15.5"/><rect x="553.5" y="936" width="1.8" height="15.5"/><rect x="621.0" y="936" width="1.8" height="15.5"/><rect x="688.5" y="936" width="1.8" height="15.5"/><rect x="756.0" y="936" width="1.8" height="15.5"/><rect x="823.5" y="936" width="1.8" height="15.5"/><rect x="891.1" y="936" width="1.8" height="15.5"/><rect x="958.6" y="936" width="1.8" height="15.5"/><rect x="1026.1" y="936" width="1.8" height="15.5"/><rect x="1093.6" y="936" width="1.8" height="15.5"/><rect x="1161.1" y="936" width="1.8" height="15.5"/><rect x="1228.7" y="936" width="1.8" height="15.5"/><rect x="1296.2" y="936" width="1.8" height="15.5"/><rect x="1363.7" y="936" width="1.8" height="15.5"/><rect x="1431.2" y="936" width="1.8" height="15.5"/><rect x="1498.7" y="936" width="1.8" height="15.5"/><rect x="1566.3" y="936" width="1.8" height="15.5"/><rect x="1633.8" y="936" width="1.8" height="15.5"/></g>
    <!-- playback -->
    <g fill="#d0d0d0">
      <rect x="1739" y="930.500" width="2" height="14"/><path d="M1749 930.500V944.500L1742 937.500Z M1756 930.500V944.500L1749 937.500Z"/>
      <rect x="1764.500" y="930.500" width="2" height="14"/><path d="M1777 930.500V944.500L1768 937.500Z"/>
      <path d="M1800 930.500V944.500L1791 937.500Z"/>
      <path d="M1823 929.500V945.500L1810 937.500Z"/>
      <path d="M1834 929.500V945.500L1847 937.500Z"/>
      <path d="M1856.500 930.500V944.500L1865.500 937.500Z"/>
      <path d="M1879.500 930.500V944.500L1888.500 937.500Z"/><rect x="1890" y="930.500" width="2" height="14"/>
      <path d="M1901 930.500V944.500L1908 937.500Z M1908 930.500V944.500L1915 937.500Z"/><rect x="1915.500" y="930.500" width="2" height="14"/>
    </g>
    <g fill="#e8814a"><rect x="1787" y="930.500" width="2.600" height="14"/><rect x="1788" y="928" width=".8" height="19"/><rect x="1867" y="930.500" width="2.600" height="14"/><rect x="1868" y="928" width=".8" height="19"/></g>
    <path d="M1615.500 968.500H1624.500L1620 973.500Z M1745.500 968.500H1754.500L1750 973.500Z" fill="#3a3a3a" stroke="#8a8a8a" stroke-width="1"/>
    <!-- auto key -->
    <path d="M1873.500 968A7.500 7.500 0 0 1 1887.500 970M1887.500 976A7.500 7.500 0 0 1 1873.500 974.500" fill="none" stroke="#d0d0d0" stroke-width="1.400"/><path d="M1872 966V970.500H1876.500Z M1889 978.500V974H1884.500Z" fill="#d0d0d0"/><path d="M1875.500 972H1885.500" stroke="#d0d0d0" stroke-width="1.200"/><rect x="1879.200" y="967.500" width="2.400" height="9" fill="#e8814a"/>
    <!-- char -->
    <circle cx="1905" cy="967" r="2.800" fill="none" stroke="#d0d0d0" stroke-width="1.600"/><circle cx="1905" cy="967" r="4.300" fill="none" stroke="#d0d0d0" stroke-width="1.300" stroke-dasharray="1.500 1.900"/>
    <circle cx="1915" cy="968.500" r="1.800" fill="#e8814a"/><path d="M1909.500 973.500L1913.500 971.500L1916.500 973L1918.500 975.500M1914 972L1912.500 977L1915.500 979.500L1915 983M1912.500 977L1909.500 979.500L1906.500 979" fill="none" stroke="#e8814a" stroke-width="1.700" stroke-linecap="round" stroke-linejoin="round"/>
    <!-- script editor -->
    <rect x="1903.500" y="996.500" width="17" height="20" fill="#d0d0d0"/><rect x="1903.500" y="996.500" width="17" height="3" fill="#8a8a8a"/><text x="1906" y="1012" font-size="9.500" font-weight="bold" fill="#333" font-family="Liberation Sans, sans-serif">{;}</text>
  </svg>
</div>

</body>
</html>
